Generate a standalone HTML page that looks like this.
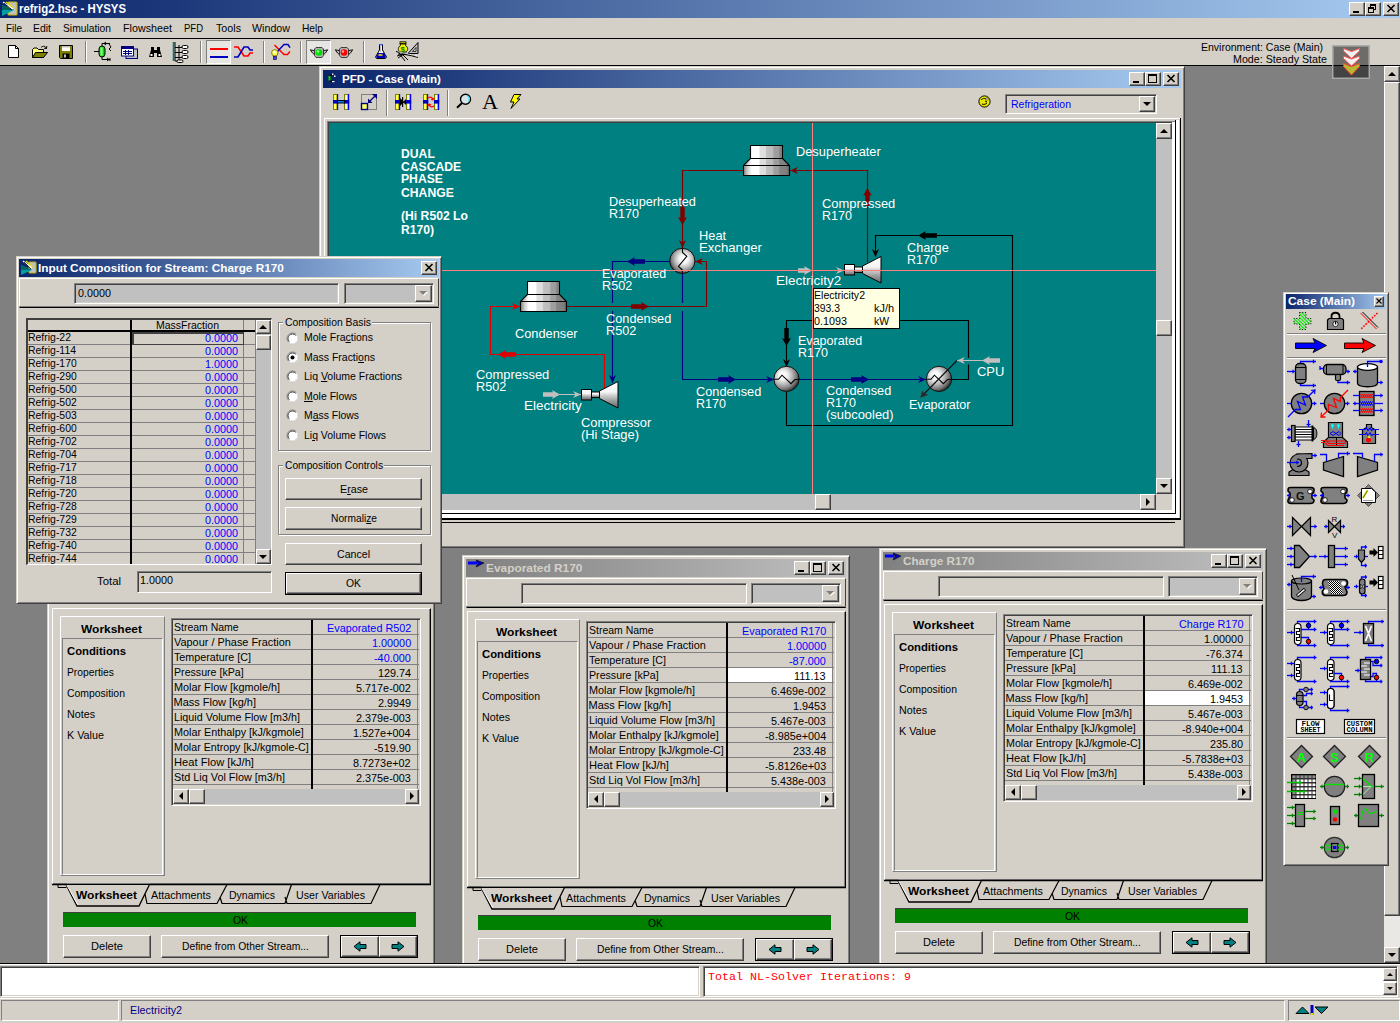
<!DOCTYPE html>
<html><head><meta charset="utf-8"><title>refrig2.hsc - HYSYS</title>
<style>
html,body{margin:0;padding:0}
body{width:1400px;height:1023px;position:relative;overflow:hidden;background:#808080;font-family:"Liberation Sans",sans-serif;font-size:11px}
.a{position:absolute;box-sizing:border-box}
.t{position:absolute;white-space:pre;transform-origin:0 50%}
.win{background:#d4d0c8;border:1px solid;border-color:#d4d0c8 #404040 #404040 #d4d0c8;box-shadow:inset 1px 1px #fff,inset -1px -1px #808080}
.btn{background:#d4d0c8;border:1px solid;border-color:#fff #404040 #404040 #fff;box-shadow:inset -1px -1px #808080}
.btn2{background:#d4d0c8;border:1px solid;border-color:#fff #404040 #404040 #fff;box-shadow:inset -1px -1px #808080,inset 1px 1px #d4d0c8}
.sunk{border:1px solid;border-color:#808080 #fff #fff #808080;box-shadow:inset 1px 1px #404040,inset -1px -1px #d4d0c8}
.sunk1{border:1px solid;border-color:#808080 #fff #fff #808080}
.rais1{border:1px solid;border-color:#fff #808080 #808080 #fff}
.etch{border:1px solid #808080;box-shadow:1px 1px #fff,inset 1px 1px #fff}
.tg{background:linear-gradient(90deg,#0a246a,#a6caf0)}
.tgi{background:linear-gradient(90deg,#808080,#c0c0c0)}
svg{position:absolute;overflow:visible}
</style></head>
<body>
<div class="a " style="left:1384px;top:66px;width:16px;height:897px;background:#eae8e4;"></div>
<div class="a btn2" style="left:1384px;top:66px;width:16px;height:16px;"></div>
<svg style="left:1388px;top:72px" width="8" height="4"><path d="M0 4L4 0L8 4Z" fill="#000"/></svg>
<div class="a btn2" style="left:1384px;top:947px;width:16px;height:16px;"></div>
<svg style="left:1388px;top:953px" width="8" height="4"><path d="M0 0L8 0L4 4Z" fill="#000"/></svg>
<div class="a btn2" style="left:1384px;top:82px;width:16px;height:834px;"></div>
<div class="a win" style="left:319px;top:66px;width:866px;height:482px;"></div>
<div class="a tg" style="left:323px;top:70px;width:858px;height:18px;"></div>
<svg style="left:328px;top:73px" width="9" height="10"><path d="M6 1.5C2 1 1.5 4 1.5 5.5C1.5 8 3 9 6 8.5" stroke="#000" stroke-width="1.4" fill="none"/><rect x="0.5" y="3" width="2" height="4.5" fill="#00e000"/><rect x="4" y="0.5" width="1.5" height="1.5" fill="#fff"/><rect x="6" y="2.5" width="1.5" height="1.5" fill="#fff"/><rect x="4" y="8" width="2.5" height="1.2" fill="#fff"/></svg>
<span class="t" style="left:342.0px;top:73px;font-size:11px;line-height:13px;color:#fff;font-weight:bold;transform:scaleX(1.058);">PFD - Case (Main)</span>
<div class="a btn" style="left:1129px;top:72px;width:16px;height:14px;"></div>
<div class="a " style="left:1133px;top:81px;width:6px;height:2px;background:#000;"></div>
<div class="a btn" style="left:1145px;top:72px;width:16px;height:14px;"></div>
<div class="a " style="left:1148px;top:74px;width:9px;height:9px;border:1px solid #000;border-top:2px solid #000;"></div>
<div class="a btn" style="left:1163px;top:72px;width:16px;height:14px;"></div>
<svg style="left:1167px;top:75px" width="8" height="7"><path d="M0.5 0L7.5 7M7.5 0L0.5 7" stroke="#000" stroke-width="1.6" fill="none"/></svg>
<div class="a " style="left:386px;top:90px;width:1px;height:26px;background:#808080;"></div>
<div class="a " style="left:387px;top:90px;width:1px;height:26px;background:#fff;"></div>
<div class="a " style="left:447px;top:90px;width:1px;height:26px;background:#808080;"></div>
<div class="a " style="left:448px;top:90px;width:1px;height:26px;background:#fff;"></div>
<svg style="left:333px;top:94px" width="17" height="16"><rect x="0.5" y="0.5" width="3.5" height="15" fill="#ffff00" stroke="#808000"/><rect x="1.7" y="1" width="1.200" height="14" fill="#fff"/><rect x="4" y="0" width="1.200" height="16" fill="#0000ff"/><rect x="0" y="6" width="5.200" height="3.600" fill="#0000c0"/><rect x="11.5" y="0.5" width="3.5" height="15" fill="#ffff00" stroke="#808000"/><rect x="12.7" y="1" width="1.200" height="14" fill="#fff"/><rect x="15" y="0" width="1.200" height="16" fill="#0000ff"/><rect x="11" y="6" width="5.200" height="3.600" fill="#0000c0"/><rect x="4" y="6" width="8" height="3.5" fill="#000"/><rect x="5" y="7" width="6" height="1.5" fill="#0080ff"/></svg>
<svg style="left:361px;top:94px" width="17" height="16"><rect x="0.5" y="0.5" width="15" height="15" fill="none" stroke="#808080"/><rect x="0.5" y="9.5" width="6" height="6" fill="#ffff60" stroke="#000080" stroke-width="1.4"/><path d="M14 2L8 8" stroke="#000080" stroke-width="1.3"/><path d="M7 4.5L7 9L11.5 9Z" fill="#000080"/><path d="M11 0L16 0L16 5Z" fill="#000080"/></svg>
<svg style="left:395px;top:94px" width="17" height="16"><rect x="0.5" y="0.5" width="3.5" height="15" fill="#ffff00" stroke="#808000"/><rect x="1.7" y="1" width="1.200" height="14" fill="#fff"/><rect x="4" y="0" width="1.200" height="16" fill="#0000ff"/><rect x="0" y="6" width="5.200" height="3.600" fill="#0000c0"/><rect x="11.5" y="0.5" width="3.5" height="15" fill="#ffff00" stroke="#808000"/><rect x="12.7" y="1" width="1.200" height="14" fill="#fff"/><rect x="15" y="0" width="1.200" height="16" fill="#0000ff"/><rect x="11" y="6" width="5.200" height="3.600" fill="#0000c0"/><path d="M5 4L9 8L5 12Z" fill="#000"/><path d="M11 5L8 8L11 11Z" fill="#000"/><rect x="7" y="3" width="1.2" height="10" fill="#000"/></svg>
<svg style="left:423px;top:94px" width="17" height="16"><rect x="0.5" y="0.5" width="3.5" height="15" fill="#ffff00" stroke="#808000"/><rect x="1.7" y="1" width="1.200" height="14" fill="#fff"/><rect x="4" y="0" width="1.200" height="16" fill="#0000ff"/><rect x="0" y="6" width="5.200" height="3.600" fill="#0000c0"/><rect x="11.5" y="0.5" width="3.5" height="15" fill="#ffff00" stroke="#808000"/><rect x="12.7" y="1" width="1.200" height="14" fill="#fff"/><rect x="15" y="0" width="1.200" height="16" fill="#0000ff"/><rect x="11" y="6" width="5.200" height="3.600" fill="#0000c0"/><path d="M5 4C8 2 10 4 10 6M10 6L8 5M10 6L11 4M11 12C8 14 6 12 6 10M6 10L8 11M6 10L5 12" stroke="#ff0000" stroke-width="1.2" fill="none"/></svg>
<svg style="left:455px;top:93px" width="18" height="18"><circle cx="10.5" cy="6.2" r="5" fill="#d8e4e8" stroke="#000" stroke-width="1.4"/><path d="M12.5 2.8A4 4 0 0 1 13.5 8.5" stroke="#40e0ff" stroke-width="1.3" fill="none"/><path d="M7 10L2 14.8" stroke="#000" stroke-width="2"/></svg>
<span class="t" style="left:482px;top:91.5px;font-family:'Liberation Serif',serif;font-size:20px;line-height:21px;color:#000;transform:scaleX(1.12)">A</span>
<svg style="left:509px;top:94px" width="13" height="16"><path d="M5 0.5L12 0.5L8 5L11 5L2 14.5L5 8L1.5 8Z" fill="#ffff00" stroke="#000" stroke-width="1"/></svg>
<svg style="left:978px;top:95px" width="13" height="13"><circle cx="6.5" cy="6.5" r="5.6" fill="#e8e800" stroke="#000"/><path d="M3 5C5 3 8 3 9 5M4 9C6 10 8 9 9 8M7 6L9 7" stroke="#000" stroke-width="1" fill="none"/><circle cx="9" cy="4" r="1.2" fill="#fff" stroke="#000" stroke-width="0.5"/></svg>
<div class="a sunk" style="left:1005px;top:94px;width:152px;height:20px;background:#d4d0c8;"></div>
<span class="t" style="left:1011.0px;top:97.5px;font-size:11px;line-height:13px;color:#0000ff;transform:scaleX(0.952);">Refrigeration</span>
<div class="a btn2" style="left:1139px;top:96px;width:16px;height:16px;"></div>
<svg style="left:1143px;top:102px" width="8" height="4"><path d="M0 0L8 0L4 4Z" fill="#000"/></svg>
<div class="a " style="left:324px;top:118px;width:856px;height:1px;background:#fff;"></div>
<div class="a " style="left:324px;top:118px;width:1px;height:395px;background:#fff;"></div>
<div class="a " style="left:327px;top:121px;width:848px;height:1px;background:#808080;"></div>
<div class="a " style="left:327px;top:121px;width:1px;height:390px;background:#808080;"></div>
<div class="a " style="left:328px;top:122px;width:846px;height:1px;background:#404040;"></div>
<div class="a " style="left:328px;top:122px;width:1px;height:388px;background:#404040;"></div>
<div class="a " style="left:1172px;top:122px;width:3px;height:391px;background:#fff;"></div>
<div class="a " style="left:328px;top:510px;width:847px;height:3px;background:#fff;"></div>
<div class="a " style="left:1175px;top:120px;width:1px;height:394px;background:#000;"></div>
<div class="a " style="left:326px;top:513px;width:850px;height:1px;background:#000;"></div>
<div class="a " style="left:1176px;top:120px;width:3px;height:398px;background:#fff;"></div>
<div class="a " style="left:324px;top:514px;width:855px;height:4px;background:#fff;"></div>
<div class="a " style="left:1180px;top:118px;width:1px;height:402px;background:#000;"></div>
<div class="a " style="left:323px;top:518px;width:858px;height:2px;background:#000;"></div>
<div class="a " style="left:323px;top:522px;width:852px;height:1px;background:#000;"></div>
<div class="a " style="left:329px;top:123px;width:827px;height:371px;background:#008080;overflow:hidden;"></div>
<div class="a " style="left:1156px;top:123px;width:16px;height:371px;background:#c0c0c0;"></div>
<div class="a btn2" style="left:1156px;top:123px;width:16px;height:16px;"></div>
<svg style="left:1160px;top:129px" width="8" height="4"><path d="M0 4L4 0L8 4Z" fill="#000"/></svg>
<div class="a btn2" style="left:1156px;top:478px;width:16px;height:16px;"></div>
<svg style="left:1160px;top:484px" width="8" height="4"><path d="M0 0L8 0L4 4Z" fill="#000"/></svg>
<div class="a btn2" style="left:1156px;top:320px;width:16px;height:16px;"></div>
<div class="a " style="left:329px;top:494px;width:827px;height:16px;background:#c0c0c0;"></div>
<div class="a btn2" style="left:329px;top:494px;width:16px;height:16px;"></div>
<svg style="left:335px;top:498px" width="4" height="8"><path d="M4 0L4 8L0 4Z" fill="#000"/></svg>
<div class="a btn2" style="left:1140px;top:494px;width:16px;height:16px;"></div>
<svg style="left:1146px;top:498px" width="4" height="8"><path d="M0 0L0 8L4 4Z" fill="#000"/></svg>
<div class="a btn2" style="left:815px;top:494px;width:16px;height:16px;"></div>
<div class="a " style="left:1156px;top:494px;width:16px;height:16px;background:#d4d0c8;"></div>
<svg style="left:0;top:0" width="1400" height="1023" shape-rendering="auto"><defs><linearGradient id="mg" x1="0" x2="1" y1="0" y2="0"><stop offset="0" stop-color="#808080"/><stop offset=".08" stop-color="#c8c8c8"/><stop offset=".18" stop-color="#ffffff"/><stop offset=".33" stop-color="#ffffff"/><stop offset=".36" stop-color="#e0e0e0"/><stop offset=".48" stop-color="#dcdcdc"/><stop offset=".5" stop-color="#c0c0c0"/><stop offset=".63" stop-color="#bcbcbc"/><stop offset=".66" stop-color="#a0a0a0"/><stop offset=".76" stop-color="#9c9c9c"/><stop offset=".79" stop-color="#848484"/><stop offset=".93" stop-color="#808080"/><stop offset="1" stop-color="#606060"/></linearGradient><radialGradient id="sg" cx=".36" cy=".36" r=".68"><stop offset="0" stop-color="#ffffff"/><stop offset=".25" stop-color="#f4f4f4"/><stop offset=".55" stop-color="#b4b4b4"/><stop offset=".8" stop-color="#787878"/><stop offset="1" stop-color="#282828"/></radialGradient><radialGradient id="sg2" cx=".56" cy=".42" r=".6"><stop offset="0" stop-color="#ffffff"/><stop offset=".3" stop-color="#f4f4f4"/><stop offset=".6" stop-color="#b8b8b8"/><stop offset=".85" stop-color="#787878"/><stop offset="1" stop-color="#282828"/></radialGradient><linearGradient id="cg" x1="0" x2="0" y1="0" y2="1"><stop offset="0" stop-color="#ffffff"/><stop offset=".4" stop-color="#f4f4f4"/><stop offset=".52" stop-color="#d0d0d0"/><stop offset=".75" stop-color="#989898"/><stop offset="1" stop-color="#6c6c6c"/></linearGradient></defs><path d="M670 261.5L612.5 261.5L612.5 383" stroke="#000080" stroke-width="1.15" fill="none" stroke-linejoin="miter"/><path d="M645 259.3L634 259.3L635 257.0L627 261.5L635 266.0L634 263.7L645 263.7Z" fill="#000080"/><path d="M612.5 383L608.9 375L612.5 377.5L616.1 375Z" fill="#000080"/><path d="M682.5 273L682.5 379.5L774 379.5" stroke="#000080" stroke-width="1.15" fill="none" stroke-linejoin="miter"/><path d="M718 377.3L729 377.3L728 375.0L736 379.5L728 384.0L729 381.7L718 381.7Z" fill="#000080"/><path d="M774 379.5L766 375.9L768.5 379.5L766 383.1Z" fill="#000080"/><path d="M799 379.5L926 379.5" stroke="#000080" stroke-width="1.15" fill="none" stroke-linejoin="miter"/><path d="M851 377.3L862 377.3L861 375.0L869 379.5L861 384.0L862 381.7L851 381.7Z" fill="#000080"/><path d="M926 379.5L918 375.9L920.5 379.5L918 383.1Z" fill="#000080"/><rect x="611" y="303" width="3" height="8" fill="#008080"/><rect x="681" y="303" width="3" height="8" fill="#008080"/><path d="M743 170.5L682.5 170.5L682.5 248" stroke="#800000" stroke-width="1.15" fill="none" stroke-linejoin="miter"/><path d="M680.3 207L680.3 218L678.0 217L682.5 225L687.0 217L684.7 218L684.7 207Z" fill="#800000"/><path d="M682.5 248L678.9 240L682.5 242.5L686.1 240Z" fill="#800000"/><path d="M867.5 262L867.5 170.5L790 170.5" stroke="#800000" stroke-width="1.15" fill="none" stroke-linejoin="miter"/><path d="M865.3 206L865.3 195L863.0 196L867.5 188L872.0 196L869.7 195L869.7 206Z" fill="#800000"/><path d="M790 170.5L798 166.9L795.5 170.5L798 174.1Z" fill="#800000"/><path d="M567 306.5L706.5 306.5L706.5 261.5L695 261.5" stroke="#800000" stroke-width="1.15" fill="none" stroke-linejoin="miter"/><path d="M631 304.3L642 304.3L641 302.0L649 306.5L641 311.0L642 308.7L631 308.7Z" fill="#800000"/><path d="M695 261.5L703 257.9L700.5 261.5L703 265.1Z" fill="#800000"/><path d="M604.5 388L604.5 354.5L490.5 354.5L490.5 306.5L520 306.5" stroke="#e00000" stroke-width="1.15" fill="none" stroke-linejoin="miter"/><path d="M516 352.3L505 352.3L506 350.0L498 354.5L506 359.0L505 356.7L516 356.7Z" fill="#e00000"/><path d="M520 306.5L512 302.9L514.5 306.5L512 310.1Z" fill="#e00000"/><path d="M951 379.5L968.5 379.5L968.5 320.5L786.5 320.5L786.5 367" stroke="#000000" stroke-width="1.15" fill="none" stroke-linejoin="miter"/><path d="M784.3 328L784.3 339L782.0 338L786.5 346L791.0 338L788.7 339L788.7 328Z" fill="#000000"/><path d="M786.5 367L782.9 359L786.5 361.5L790.1 359Z" fill="#000000"/><path d="M786.5 392L786.5 425.5L1012.5 425.5L1012.5 235.5L875.5 235.5L875.5 256" stroke="#000000" stroke-width="1.15" fill="none" stroke-linejoin="miter"/><path d="M937 233.3L925 233.3L926 231.0L918 235.5L926 240.0L925 237.7L937 237.7Z" fill="#000000"/><path d="M875.5 257L871.9 249L875.5 251.5L879.1 249Z" fill="#000000"/><path d="M543 394.5L581 394.5" stroke="#c0c0c0" stroke-width="1.15" fill="none" stroke-linejoin="miter"/><path d="M543 392.3L553 392.3L552 390.0L560 394.5L552 399.0L553 396.7L543 396.7Z" fill="#c0c0c0"/><path d="M581 394.5L573 390.9L575.5 394.5L573 398.1Z" fill="#c0c0c0"/><path d="M798 270.5L844 270.5" stroke="#c0c0c0" stroke-width="1.15" fill="none" stroke-linejoin="miter"/><path d="M798 268.3L805 268.3L804 266.0L812 270.5L804 275.0L805 272.7L798 272.7Z" fill="#c0c0c0"/><path d="M844 270.5L836 266.9L838.5 270.5L836 274.1Z" fill="#c0c0c0"/><rect x="967" y="358" width="3" height="6.5" fill="#008080"/><path d="M1000 360.5L957 360.5" stroke="#c0c0c0" stroke-width="1.15" fill="none" stroke-linejoin="miter"/><path d="M1000 358.3L989 358.3L990 356.0L982 360.5L990 365.0L989 362.7L1000 362.7Z" fill="#c0c0c0"/><path d="M957 360.5L965 356.9L962.5 360.5L965 364.1Z" fill="#c0c0c0"/><path d="M750.5 145.5L782.5 145.5L782.5 158.5L789.5 165.5L789.5 175.5L743.5 175.5L743.5 165.5L750.5 158.5Z" fill="url(#mg)" stroke="#000" stroke-width="1.1"/><path d="M743.5 165.5L789.5 165.5M750.5 158.5L782.5 158.5" stroke="#000" stroke-width="1"/><path d="M527.5 281.5L559.5 281.5L559.5 294.5L566.5 301.5L566.5 311.5L520.5 311.5L520.5 301.5L527.5 294.5Z" fill="url(#mg)" stroke="#000" stroke-width="1.1"/><path d="M520.5 301.5L566.5 301.5M527.5 294.5L559.5 294.5" stroke="#000" stroke-width="1"/><circle cx="682.3" cy="260.9" r="12.6" fill="url(#sg2)" stroke="#101010" stroke-width="1"/><path d="M682.5 248.5L682.5 252.4L686.8 256.3L678.4 266.4L682 269.6L682.5 273.4" stroke="#000" stroke-width="1.1" fill="none"/><circle cx="786.5" cy="378.9" r="12.6" fill="url(#sg)" stroke="#101010" stroke-width="1"/><path d="M773.5 379.3L778.5 379.3L782 375.2L791 383.7L795 379.5L799.500 379.3" stroke="#000" stroke-width="1.1" fill="none"/><circle cx="939" cy="378.9" r="12.6" fill="url(#sg)" stroke="#101010" stroke-width="1"/><path d="M926 379.3L931 379.3L934.4 375.2L943.4 383.7L947.5 379.5L952 379.3" stroke="#000" stroke-width="1.1" fill="none"/><path d="M957 360.5L924 394" stroke="#101010" stroke-width="1.1" fill="none" stroke-linejoin="miter"/><path d="M920.300 397.800L922.300 390.500L924.500 393.800L928.500 394.800Z" fill="#302828"/><rect x="844.5" y="264.5" width="10" height="10.5" fill="url(#cg)" stroke="#000" stroke-width="1"/><rect x="854.5" y="267.0" width="8" height="5.5" fill="url(#cg)" stroke="#000" stroke-width="1"/><path d="M862.5 266.0L881.0 256.5L881.0 283.0L862.5 273.5Z" fill="url(#cg)" stroke="#000" stroke-width="1"/><rect x="581.5" y="389.5" width="10" height="10.5" fill="url(#cg)" stroke="#000" stroke-width="1"/><rect x="591.5" y="392.0" width="8" height="5.5" fill="url(#cg)" stroke="#000" stroke-width="1"/><path d="M599.5 391.0L618.0 381.5L618.0 408.0L599.5 398.5Z" fill="url(#cg)" stroke="#000" stroke-width="1"/><path d="M441 270.5L1156 270.5M812.5 123L812.5 494" stroke="#ff7f7f" stroke-width="1" fill="none" shape-rendering="crispEdges"/></svg>
<span class="t" style="left:400.5px;top:148.3px;font-size:12px;line-height:14px;color:#fff;font-weight:bold;transform:scaleX(1.015);line-height:12.3px;">DUAL</span>
<span class="t" style="left:400.5px;top:161.2px;font-size:12px;line-height:14px;color:#fff;font-weight:bold;transform:scaleX(1.015);line-height:12.3px;">CASCADE</span>
<span class="t" style="left:400.5px;top:173.3px;font-size:12px;line-height:14px;color:#fff;font-weight:bold;transform:scaleX(1.015);line-height:12.3px;">PHASE</span>
<span class="t" style="left:400.5px;top:186.5px;font-size:12px;line-height:14px;color:#fff;font-weight:bold;transform:scaleX(1.015);line-height:12.3px;">CHANGE</span>
<span class="t" style="left:400.5px;top:210.1px;font-size:12px;line-height:14px;color:#fff;font-weight:bold;transform:scaleX(1.015);line-height:12.3px;">(Hi R502 Lo</span>
<span class="t" style="left:400.5px;top:223.5px;font-size:12px;line-height:14px;color:#fff;font-weight:bold;transform:scaleX(1.015);line-height:12.3px;">R170)</span>
<span class="t" style="left:796.0px;top:145.8px;font-size:13px;line-height:15px;color:#fff;transform:scaleX(0.985);line-height:12px;">Desuperheater</span>
<span class="t" style="left:609.0px;top:195.8px;font-size:13px;line-height:15px;color:#fff;transform:scaleX(0.978);line-height:12px;">Desuperheated</span>
<span class="t" style="left:609.0px;top:207.8px;font-size:13px;line-height:15px;color:#fff;transform:scaleX(0.962);line-height:12px;">R170</span>
<span class="t" style="left:822.0px;top:198.3px;font-size:13px;line-height:15px;color:#fff;transform:scaleX(0.994);line-height:12px;">Compressed</span>
<span class="t" style="left:822.0px;top:210.3px;font-size:13px;line-height:15px;color:#fff;transform:scaleX(0.962);line-height:12px;">R170</span>
<span class="t" style="left:699.0px;top:230.3px;font-size:13px;line-height:15px;color:#fff;transform:scaleX(0.987);line-height:12px;">Heat</span>
<span class="t" style="left:699.0px;top:242.3px;font-size:13px;line-height:15px;color:#fff;transform:scaleX(1.013);line-height:12px;">Exchanger</span>
<span class="t" style="left:906.5px;top:242.3px;font-size:13px;line-height:15px;color:#fff;transform:scaleX(0.978);line-height:12px;">Charge</span>
<span class="t" style="left:906.5px;top:254.3px;font-size:13px;line-height:15px;color:#fff;transform:scaleX(0.962);line-height:12px;">R170</span>
<span class="t" style="left:602.0px;top:267.8px;font-size:13px;line-height:15px;color:#fff;transform:scaleX(0.965);line-height:12px;">Evaporated</span>
<span class="t" style="left:602.0px;top:279.8px;font-size:13px;line-height:15px;color:#fff;transform:scaleX(0.974);line-height:12px;">R502</span>
<span class="t" style="left:776.0px;top:275.3px;font-size:13px;line-height:15px;color:#fff;transform:scaleX(1.039);line-height:12px;">Electricity2</span>
<span class="t" style="left:606.0px;top:312.8px;font-size:13px;line-height:15px;color:#fff;transform:scaleX(0.981);line-height:12px;">Condensed</span>
<span class="t" style="left:606.0px;top:324.8px;font-size:13px;line-height:15px;color:#fff;transform:scaleX(0.974);line-height:12px;">R502</span>
<span class="t" style="left:515.0px;top:328.3px;font-size:13px;line-height:15px;color:#fff;transform:scaleX(0.984);line-height:12px;">Condenser</span>
<span class="t" style="left:798.0px;top:335.3px;font-size:13px;line-height:15px;color:#fff;transform:scaleX(0.965);line-height:12px;">Evaporated</span>
<span class="t" style="left:798.0px;top:347.3px;font-size:13px;line-height:15px;color:#fff;transform:scaleX(0.962);line-height:12px;">R170</span>
<span class="t" style="left:977.0px;top:366.3px;font-size:13px;line-height:15px;color:#fff;transform:scaleX(0.994);line-height:12px;">CPU</span>
<span class="t" style="left:476.0px;top:368.8px;font-size:13px;line-height:15px;color:#fff;transform:scaleX(0.994);line-height:12px;">Compressed</span>
<span class="t" style="left:476.0px;top:380.8px;font-size:13px;line-height:15px;color:#fff;transform:scaleX(0.974);line-height:12px;">R502</span>
<span class="t" style="left:696.0px;top:385.8px;font-size:13px;line-height:15px;color:#fff;transform:scaleX(0.981);line-height:12px;">Condensed</span>
<span class="t" style="left:696.0px;top:397.8px;font-size:13px;line-height:15px;color:#fff;transform:scaleX(0.962);line-height:12px;">R170</span>
<span class="t" style="left:826.0px;top:385.3px;font-size:13px;line-height:15px;color:#fff;transform:scaleX(0.981);line-height:12px;">Condensed</span>
<span class="t" style="left:826.0px;top:397.3px;font-size:13px;line-height:15px;color:#fff;transform:scaleX(0.962);line-height:12px;">R170</span>
<span class="t" style="left:826.0px;top:409.3px;font-size:13px;line-height:15px;color:#fff;transform:scaleX(0.995);line-height:12px;">(subcooled)</span>
<span class="t" style="left:909.0px;top:399.3px;font-size:13px;line-height:15px;color:#fff;transform:scaleX(0.965);line-height:12px;">Evaporator</span>
<span class="t" style="left:524.0px;top:400.3px;font-size:13px;line-height:15px;color:#fff;transform:scaleX(1.039);line-height:12px;">Electricity</span>
<span class="t" style="left:581.0px;top:417.3px;font-size:13px;line-height:15px;color:#fff;transform:scaleX(0.993);line-height:12px;">Compressor</span>
<span class="t" style="left:581.0px;top:429.3px;font-size:13px;line-height:15px;color:#fff;transform:scaleX(0.991);line-height:12px;">(Hi Stage)</span>
<div class="a " style="left:813px;top:288px;width:87px;height:41px;background:#ffffe1;border:1px solid #000;"></div>
<span class="t" style="left:814.0px;top:289px;font-size:11px;line-height:13px;color:#000;transform:scaleX(0.959);">Electricity2</span>
<span class="t" style="left:814.0px;top:302px;font-size:11px;line-height:13px;color:#000;transform:scaleX(0.943);">393.3</span>
<span class="t" style="left:874.0px;top:302px;font-size:11px;line-height:13px;color:#000;transform:scaleX(0.991);">kJ/h</span>
<span class="t" style="left:814.0px;top:315px;font-size:11px;line-height:13px;color:#000;transform:scaleX(0.980);">0.1093</span>
<span class="t" style="left:874.0px;top:315px;font-size:11px;line-height:13px;color:#000;transform:scaleX(0.945);">kW</span>
<div class="a win" style="left:47px;top:552px;width:388px;height:430px;"></div>
<div class="a " style="left:52px;top:608px;width:379px;height:277px;border:1px solid;border-color:#fff #000 #000 #fff;box-shadow:inset -1px -1px #808080;"></div>
<div class="a rais1" style="left:60px;top:616px;width:105px;height:260px;"></div>
<div class="a sunk1" style="left:62px;top:638px;width:101px;height:237px;"></div>
<span class="t" style="left:81.0px;top:623px;font-size:11px;line-height:13px;color:#000;font-weight:bold;transform:scaleX(1.088);">Worksheet</span>
<span class="t" style="left:67.3px;top:644.5px;font-size:11px;line-height:13px;color:#000;font-weight:bold;transform:scaleX(1.027);">Conditions</span>
<span class="t" style="left:67.3px;top:665.5px;font-size:11px;line-height:13px;color:#000;transform:scaleX(0.937);">Properties</span>
<span class="t" style="left:67.3px;top:686.5px;font-size:11px;line-height:13px;color:#000;transform:scaleX(0.948);">Composition</span>
<span class="t" style="left:67.3px;top:707.5px;font-size:11px;line-height:13px;color:#000;transform:scaleX(0.974);">Notes</span>
<span class="t" style="left:67.3px;top:728.5px;font-size:11px;line-height:13px;color:#000;transform:scaleX(0.980);">K Value</span>
<div class="a " style="left:171px;top:618px;width:250px;height:188px;border:1px solid;border-color:#808080 #fff #fff #808080;box-shadow:inset 1px 1px #404040;"></div>
<div class="a " style="left:173px;top:634px;width:246px;height:1px;background:#808080;"></div>
<span class="t" style="left:173.5px;top:621px;font-size:11px;line-height:13px;color:#000;transform:scaleX(0.953);">Stream Name</span>
<span class="t" style="left:326.6px;top:621.5px;font-size:11px;line-height:13px;color:#0000ff;transform:scaleX(0.985);">Evaporated R502</span>
<div class="a " style="left:173px;top:649px;width:246px;height:1px;background:#808080;"></div>
<span class="t" style="left:173.5px;top:636px;font-size:11px;line-height:13px;color:#000;transform:scaleX(0.992);">Vapour / Phase Fraction</span>
<span class="t" style="left:371.8px;top:636.5px;font-size:11px;line-height:13px;color:#0000ff;transform:scaleX(0.985);">1.00000</span>
<div class="a " style="left:173px;top:664px;width:246px;height:1px;background:#808080;"></div>
<span class="t" style="left:173.5px;top:651px;font-size:11px;line-height:13px;color:#000;transform:scaleX(0.976);">Temperature [C]</span>
<span class="t" style="left:374.2px;top:651.5px;font-size:11px;line-height:13px;color:#0000ff;transform:scaleX(0.985);">-40.000</span>
<div class="a " style="left:173px;top:679px;width:246px;height:1px;background:#808080;"></div>
<span class="t" style="left:173.5px;top:666px;font-size:11px;line-height:13px;color:#000;transform:scaleX(0.966);">Pressure [kPa]</span>
<span class="t" style="left:377.8px;top:666.5px;font-size:11px;line-height:13px;color:#000;transform:scaleX(0.985);">129.74</span>
<div class="a " style="left:173px;top:694px;width:246px;height:1px;background:#808080;"></div>
<span class="t" style="left:173.5px;top:681px;font-size:11px;line-height:13px;color:#000;transform:scaleX(0.985);">Molar Flow [kgmole/h]</span>
<span class="t" style="left:356.1px;top:681.5px;font-size:11px;line-height:13px;color:#000;transform:scaleX(0.985);">5.717e-002</span>
<div class="a " style="left:173px;top:709px;width:246px;height:1px;background:#808080;"></div>
<span class="t" style="left:173.5px;top:696px;font-size:11px;line-height:13px;color:#000;">Mass Flow [kg/h]</span>
<span class="t" style="left:377.8px;top:696.5px;font-size:11px;line-height:13px;color:#000;transform:scaleX(0.985);">2.9949</span>
<div class="a " style="left:173px;top:724px;width:246px;height:1px;background:#808080;"></div>
<span class="t" style="left:173.5px;top:711px;font-size:11px;line-height:13px;color:#000;transform:scaleX(0.976);">Liquid Volume Flow [m3/h]</span>
<span class="t" style="left:356.1px;top:711.5px;font-size:11px;line-height:13px;color:#000;transform:scaleX(0.985);">2.379e-003</span>
<div class="a " style="left:173px;top:739px;width:246px;height:1px;background:#808080;"></div>
<span class="t" style="left:173.5px;top:726px;font-size:11px;line-height:13px;color:#000;transform:scaleX(0.982);">Molar Enthalpy [kJ/kgmole]</span>
<span class="t" style="left:353.4px;top:726.5px;font-size:11px;line-height:13px;color:#000;transform:scaleX(0.985);">1.527e+004</span>
<div class="a " style="left:173px;top:754px;width:246px;height:1px;background:#808080;"></div>
<span class="t" style="left:173.5px;top:741px;font-size:11px;line-height:13px;color:#000;transform:scaleX(0.970);">Molar Entropy [kJ/kgmole-C]</span>
<span class="t" style="left:374.2px;top:741.5px;font-size:11px;line-height:13px;color:#000;transform:scaleX(0.985);">-519.90</span>
<div class="a " style="left:173px;top:769px;width:246px;height:1px;background:#808080;"></div>
<span class="t" style="left:173.5px;top:756px;font-size:11px;line-height:13px;color:#000;transform:scaleX(1.014);">Heat Flow [kJ/h]</span>
<span class="t" style="left:353.4px;top:756.5px;font-size:11px;line-height:13px;color:#000;transform:scaleX(0.985);">8.7273e+02</span>
<div class="a " style="left:173px;top:784px;width:246px;height:1px;background:#808080;"></div>
<span class="t" style="left:173.5px;top:771px;font-size:11px;line-height:13px;color:#000;transform:scaleX(0.986);">Std Liq Vol Flow [m3/h]</span>
<span class="t" style="left:356.1px;top:771.5px;font-size:11px;line-height:13px;color:#000;transform:scaleX(0.985);">2.375e-003</span>
<div class="a " style="left:311px;top:620px;width:2px;height:169px;background:#000;"></div>
<div class="a " style="left:417px;top:620px;width:1px;height:169px;background:#808080;"></div>
<div class="a " style="left:173px;top:789px;width:246px;height:15px;background:#c0c0c0;"></div>
<div class="a btn2" style="left:173px;top:789px;width:16px;height:15px;"></div>
<svg style="left:179px;top:792px" width="4" height="8"><path d="M4 0L4 8L0 4Z" fill="#000"/></svg>
<div class="a btn2" style="left:405px;top:789px;width:14px;height:15px;"></div>
<svg style="left:410px;top:792px" width="4" height="8"><path d="M0 0L0 8L4 4Z" fill="#000"/></svg>
<div class="a btn2" style="left:189px;top:789px;width:16px;height:15px;"></div>
<svg style="left:47px;top:552px" width="388" height="360"><path d="M5 332.5L19 332.5L30 354L92 354L102.5 332.5" stroke="#000" stroke-width="1.3" fill="none"/><path d="M11 333L11 335.5L19.5 335.5" stroke="#000" stroke-width="1" fill="none"/><path d="M19.8 333L30.6 352.6" stroke="#fff" stroke-width="1" fill="none"/><path d="M102.5 332.5L384 332.5" stroke="#000" stroke-width="1.3" fill="none"/><path d="M98 342L100 351.500L170 351.500L180 332.500M173 345L175 351.500L238 351.500L244.500 332.500M238 345L240 351.500L324 351.500L333 332.500" stroke="#000" stroke-width="1.2" fill="none"/></svg>
<span class="t" style="left:76.0px;top:888.5px;font-size:11px;line-height:13px;color:#000;font-weight:bold;transform:scaleX(1.088);">Worksheet</span>
<span class="t" style="left:151.0px;top:888.5px;font-size:11px;line-height:13px;color:#000;transform:scaleX(0.981);">Attachments</span>
<span class="t" style="left:229.0px;top:888.5px;font-size:11px;line-height:13px;color:#000;transform:scaleX(0.953);">Dynamics</span>
<span class="t" style="left:295.5px;top:888.5px;font-size:11px;line-height:13px;color:#000;transform:scaleX(0.967);">User Variables</span>
<div class="a " style="left:63px;top:912px;width:353px;height:15px;background:#008000;border-top:1px solid #404040;"></div>
<span class="t" style="left:232.5px;top:913.5px;font-size:11px;line-height:13px;color:#000;transform:scaleX(0.943);">OK</span>
<div class="a btn2" style="left:63px;top:935px;width:88px;height:23px;"></div>
<span class="t" style="left:91.0px;top:940px;font-size:11px;line-height:13px;color:#000;transform:scaleX(1.006);">Delete</span>
<div class="a btn2" style="left:161px;top:935px;width:168px;height:23px;"></div>
<span class="t" style="left:181.5px;top:940px;font-size:11px;line-height:13px;color:#000;transform:scaleX(0.939);">Define from Other Stream...</span>
<div class="a " style="left:340px;top:935px;width:78px;height:23px;border:1px solid #000;"></div>
<div class="a btn2" style="left:341px;top:936px;width:38px;height:21px;"></div>
<div class="a btn2" style="left:379px;top:936px;width:38px;height:21px;"></div>
<svg style="left:353px;top:941px" width="14" height="11"><path d="M13 3.5L7 3.5L7 0.8L1 5.5L7 10.2L7 7.5L13 7.5Z" fill="#008080" stroke="#000" stroke-width="1"/></svg>
<svg style="left:391px;top:941px" width="14" height="11"><path d="M1 3.5L7 3.5L7 0.8L13 5.5L7 10.2L7 7.5L1 7.5Z" fill="#008080" stroke="#000" stroke-width="1"/></svg>
<div class="a win" style="left:462px;top:555px;width:388px;height:430px;"></div>
<div class="a tgi" style="left:466px;top:559px;width:380px;height:18px;"></div>
<svg style="left:468px;top:560px" width="17" height="8"><path d="M0 1.5L9 1.5L9 4.5L0 4.5Z" fill="#0000ff"/><path d="M8 0L16 3L8 7L10 3.5Z" fill="#0000c0" stroke="#000" stroke-width="0.6"/></svg>
<span class="t" style="left:485.5px;top:562px;font-size:11px;line-height:13px;color:#d4d0c8;font-weight:bold;transform:scaleX(1.080);">Evaporated R170</span>
<div class="a btn" style="left:794px;top:561px;width:16px;height:14px;"></div>
<div class="a " style="left:798px;top:570px;width:6px;height:2px;background:#000;"></div>
<div class="a btn" style="left:810px;top:561px;width:16px;height:14px;"></div>
<div class="a " style="left:813px;top:563px;width:9px;height:9px;border:1px solid #000;border-top:2px solid #000;"></div>
<div class="a btn" style="left:828px;top:561px;width:16px;height:14px;"></div>
<svg style="left:832px;top:564px" width="8" height="7"><path d="M0.5 0L7.5 7M7.5 0L0.5 7" stroke="#000" stroke-width="1.6" fill="none"/></svg>
<div class="a " style="left:466px;top:578px;width:380px;height:30px;border:1px solid;border-color:#fff #404040 #000 #fff;"></div>
<div class="a " style="left:466px;top:606px;width:380px;height:1px;background:#808080;"></div>
<div class="a sunk" style="left:521px;top:583px;width:226px;height:21px;"></div>
<div class="a sunk" style="left:751px;top:583px;width:90px;height:21px;background:#c0c0c0;"></div>
<div class="a btn2" style="left:822px;top:585px;width:17px;height:17px;"></div>
<svg style="left:827px;top:592px" width="8" height="4"><path d="M0 0L8 0L4 4Z" fill="#fff"/></svg>
<svg style="left:826px;top:591px" width="8" height="4"><path d="M0 0L8 0L4 4Z" fill="#808080"/></svg>
<div class="a " style="left:467px;top:611px;width:379px;height:277px;border:1px solid;border-color:#fff #000 #000 #fff;box-shadow:inset -1px -1px #808080;"></div>
<div class="a rais1" style="left:475px;top:619px;width:105px;height:260px;"></div>
<div class="a sunk1" style="left:477px;top:641px;width:101px;height:237px;"></div>
<span class="t" style="left:496.0px;top:626px;font-size:11px;line-height:13px;color:#000;font-weight:bold;transform:scaleX(1.088);">Worksheet</span>
<span class="t" style="left:482.3px;top:647.5px;font-size:11px;line-height:13px;color:#000;font-weight:bold;transform:scaleX(1.027);">Conditions</span>
<span class="t" style="left:482.3px;top:668.5px;font-size:11px;line-height:13px;color:#000;transform:scaleX(0.937);">Properties</span>
<span class="t" style="left:482.3px;top:689.5px;font-size:11px;line-height:13px;color:#000;transform:scaleX(0.948);">Composition</span>
<span class="t" style="left:482.3px;top:710.5px;font-size:11px;line-height:13px;color:#000;transform:scaleX(0.974);">Notes</span>
<span class="t" style="left:482.3px;top:731.5px;font-size:11px;line-height:13px;color:#000;transform:scaleX(0.980);">K Value</span>
<div class="a " style="left:586px;top:621px;width:250px;height:188px;border:1px solid;border-color:#808080 #fff #fff #808080;box-shadow:inset 1px 1px #404040;"></div>
<div class="a " style="left:588px;top:637px;width:246px;height:1px;background:#808080;"></div>
<span class="t" style="left:588.5px;top:624px;font-size:11px;line-height:13px;color:#000;transform:scaleX(0.953);">Stream Name</span>
<span class="t" style="left:741.6px;top:624.5px;font-size:11px;line-height:13px;color:#0000ff;transform:scaleX(0.985);">Evaporated R170</span>
<div class="a " style="left:588px;top:652px;width:246px;height:1px;background:#808080;"></div>
<span class="t" style="left:588.5px;top:639px;font-size:11px;line-height:13px;color:#000;transform:scaleX(0.992);">Vapour / Phase Fraction</span>
<span class="t" style="left:786.8px;top:639.5px;font-size:11px;line-height:13px;color:#0000ff;transform:scaleX(0.985);">1.00000</span>
<div class="a " style="left:588px;top:667px;width:246px;height:1px;background:#808080;"></div>
<span class="t" style="left:588.5px;top:654px;font-size:11px;line-height:13px;color:#000;transform:scaleX(0.976);">Temperature [C]</span>
<span class="t" style="left:789.2px;top:654.5px;font-size:11px;line-height:13px;color:#0000ff;transform:scaleX(0.985);">-87.000</span>
<div class="a " style="left:728px;top:668px;width:104px;height:14px;background:#fff;"></div>
<div class="a " style="left:588px;top:682px;width:246px;height:1px;background:#808080;"></div>
<span class="t" style="left:588.5px;top:669px;font-size:11px;line-height:13px;color:#000;transform:scaleX(0.966);">Pressure [kPa]</span>
<span class="t" style="left:794.4px;top:669.5px;font-size:11px;line-height:13px;color:#000;transform:scaleX(0.985);">111.13</span>
<div class="a " style="left:588px;top:697px;width:246px;height:1px;background:#808080;"></div>
<span class="t" style="left:588.5px;top:684px;font-size:11px;line-height:13px;color:#000;transform:scaleX(0.985);">Molar Flow [kgmole/h]</span>
<span class="t" style="left:771.1px;top:684.5px;font-size:11px;line-height:13px;color:#000;transform:scaleX(0.985);">6.469e-002</span>
<div class="a " style="left:588px;top:712px;width:246px;height:1px;background:#808080;"></div>
<span class="t" style="left:588.5px;top:699px;font-size:11px;line-height:13px;color:#000;">Mass Flow [kg/h]</span>
<span class="t" style="left:792.8px;top:699.5px;font-size:11px;line-height:13px;color:#000;transform:scaleX(0.985);">1.9453</span>
<div class="a " style="left:588px;top:727px;width:246px;height:1px;background:#808080;"></div>
<span class="t" style="left:588.5px;top:714px;font-size:11px;line-height:13px;color:#000;transform:scaleX(0.976);">Liquid Volume Flow [m3/h]</span>
<span class="t" style="left:771.1px;top:714.5px;font-size:11px;line-height:13px;color:#000;transform:scaleX(0.985);">5.467e-003</span>
<div class="a " style="left:588px;top:742px;width:246px;height:1px;background:#808080;"></div>
<span class="t" style="left:588.5px;top:729px;font-size:11px;line-height:13px;color:#000;transform:scaleX(0.982);">Molar Enthalpy [kJ/kgmole]</span>
<span class="t" style="left:764.8px;top:729.5px;font-size:11px;line-height:13px;color:#000;transform:scaleX(0.985);">-8.985e+004</span>
<div class="a " style="left:588px;top:757px;width:246px;height:1px;background:#808080;"></div>
<span class="t" style="left:588.5px;top:744px;font-size:11px;line-height:13px;color:#000;transform:scaleX(0.970);">Molar Entropy [kJ/kgmole-C]</span>
<span class="t" style="left:792.8px;top:744.5px;font-size:11px;line-height:13px;color:#000;transform:scaleX(0.985);">233.48</span>
<div class="a " style="left:588px;top:772px;width:246px;height:1px;background:#808080;"></div>
<span class="t" style="left:588.5px;top:759px;font-size:11px;line-height:13px;color:#000;transform:scaleX(1.014);">Heat Flow [kJ/h]</span>
<span class="t" style="left:764.8px;top:759.5px;font-size:11px;line-height:13px;color:#000;transform:scaleX(0.985);">-5.8126e+03</span>
<div class="a " style="left:588px;top:787px;width:246px;height:1px;background:#808080;"></div>
<span class="t" style="left:588.5px;top:774px;font-size:11px;line-height:13px;color:#000;transform:scaleX(0.986);">Std Liq Vol Flow [m3/h]</span>
<span class="t" style="left:771.1px;top:774.5px;font-size:11px;line-height:13px;color:#000;transform:scaleX(0.985);">5.438e-003</span>
<div class="a " style="left:726px;top:623px;width:2px;height:169px;background:#000;"></div>
<div class="a " style="left:832px;top:623px;width:1px;height:169px;background:#808080;"></div>
<div class="a " style="left:588px;top:792px;width:246px;height:15px;background:#c0c0c0;"></div>
<div class="a btn2" style="left:588px;top:792px;width:16px;height:15px;"></div>
<svg style="left:594px;top:795px" width="4" height="8"><path d="M4 0L4 8L0 4Z" fill="#000"/></svg>
<div class="a btn2" style="left:820px;top:792px;width:14px;height:15px;"></div>
<svg style="left:825px;top:795px" width="4" height="8"><path d="M0 0L0 8L4 4Z" fill="#000"/></svg>
<div class="a btn2" style="left:604px;top:792px;width:16px;height:15px;"></div>
<svg style="left:462px;top:555px" width="388" height="360"><path d="M5 332.5L19 332.5L30 354L92 354L102.5 332.5" stroke="#000" stroke-width="1.3" fill="none"/><path d="M11 333L11 335.5L19.5 335.5" stroke="#000" stroke-width="1" fill="none"/><path d="M19.8 333L30.6 352.6" stroke="#fff" stroke-width="1" fill="none"/><path d="M102.5 332.5L384 332.5" stroke="#000" stroke-width="1.3" fill="none"/><path d="M98 342L100 351.500L170 351.500L180 332.500M173 345L175 351.500L238 351.500L244.500 332.500M238 345L240 351.500L324 351.500L333 332.500" stroke="#000" stroke-width="1.2" fill="none"/></svg>
<span class="t" style="left:491.0px;top:891.5px;font-size:11px;line-height:13px;color:#000;font-weight:bold;transform:scaleX(1.088);">Worksheet</span>
<span class="t" style="left:566.0px;top:891.5px;font-size:11px;line-height:13px;color:#000;transform:scaleX(0.981);">Attachments</span>
<span class="t" style="left:644.0px;top:891.5px;font-size:11px;line-height:13px;color:#000;transform:scaleX(0.953);">Dynamics</span>
<span class="t" style="left:710.5px;top:891.5px;font-size:11px;line-height:13px;color:#000;transform:scaleX(0.967);">User Variables</span>
<div class="a " style="left:478px;top:915px;width:353px;height:15px;background:#008000;border-top:1px solid #404040;"></div>
<span class="t" style="left:647.5px;top:916.5px;font-size:11px;line-height:13px;color:#000;transform:scaleX(0.943);">OK</span>
<div class="a btn2" style="left:478px;top:938px;width:88px;height:23px;"></div>
<span class="t" style="left:506.0px;top:943px;font-size:11px;line-height:13px;color:#000;transform:scaleX(1.006);">Delete</span>
<div class="a btn2" style="left:576px;top:938px;width:168px;height:23px;"></div>
<span class="t" style="left:596.5px;top:943px;font-size:11px;line-height:13px;color:#000;transform:scaleX(0.939);">Define from Other Stream...</span>
<div class="a " style="left:755px;top:938px;width:78px;height:23px;border:1px solid #000;"></div>
<div class="a btn2" style="left:756px;top:939px;width:38px;height:21px;"></div>
<div class="a btn2" style="left:794px;top:939px;width:38px;height:21px;"></div>
<svg style="left:768px;top:944px" width="14" height="11"><path d="M13 3.5L7 3.5L7 0.8L1 5.5L7 10.2L7 7.5L13 7.5Z" fill="#008080" stroke="#000" stroke-width="1"/></svg>
<svg style="left:806px;top:944px" width="14" height="11"><path d="M1 3.5L7 3.5L7 0.8L13 5.5L7 10.2L7 7.5L1 7.5Z" fill="#008080" stroke="#000" stroke-width="1"/></svg>
<div class="a win" style="left:879px;top:548px;width:388px;height:430px;"></div>
<div class="a tgi" style="left:883px;top:552px;width:380px;height:18px;"></div>
<svg style="left:885px;top:553px" width="17" height="8"><path d="M0 1.5L9 1.5L9 4.5L0 4.5Z" fill="#0000ff"/><path d="M8 0L16 3L8 7L10 3.5Z" fill="#0000c0" stroke="#000" stroke-width="0.6"/></svg>
<span class="t" style="left:902.5px;top:555px;font-size:11px;line-height:13px;color:#d4d0c8;font-weight:bold;transform:scaleX(1.063);">Charge R170</span>
<div class="a btn" style="left:1211px;top:554px;width:16px;height:14px;"></div>
<div class="a " style="left:1215px;top:563px;width:6px;height:2px;background:#000;"></div>
<div class="a btn" style="left:1227px;top:554px;width:16px;height:14px;"></div>
<div class="a " style="left:1230px;top:556px;width:9px;height:9px;border:1px solid #000;border-top:2px solid #000;"></div>
<div class="a btn" style="left:1245px;top:554px;width:16px;height:14px;"></div>
<svg style="left:1249px;top:557px" width="8" height="7"><path d="M0.5 0L7.5 7M7.5 0L0.5 7" stroke="#000" stroke-width="1.6" fill="none"/></svg>
<div class="a " style="left:883px;top:571px;width:380px;height:30px;border:1px solid;border-color:#fff #404040 #000 #fff;"></div>
<div class="a " style="left:883px;top:599px;width:380px;height:1px;background:#808080;"></div>
<div class="a sunk" style="left:938px;top:576px;width:226px;height:21px;"></div>
<div class="a sunk" style="left:1168px;top:576px;width:90px;height:21px;background:#c0c0c0;"></div>
<div class="a btn2" style="left:1239px;top:578px;width:17px;height:17px;"></div>
<svg style="left:1244px;top:585px" width="8" height="4"><path d="M0 0L8 0L4 4Z" fill="#fff"/></svg>
<svg style="left:1243px;top:584px" width="8" height="4"><path d="M0 0L8 0L4 4Z" fill="#808080"/></svg>
<div class="a " style="left:884px;top:604px;width:379px;height:277px;border:1px solid;border-color:#fff #000 #000 #fff;box-shadow:inset -1px -1px #808080;"></div>
<div class="a rais1" style="left:892px;top:612px;width:105px;height:260px;"></div>
<div class="a sunk1" style="left:894px;top:634px;width:101px;height:237px;"></div>
<span class="t" style="left:913.0px;top:619px;font-size:11px;line-height:13px;color:#000;font-weight:bold;transform:scaleX(1.088);">Worksheet</span>
<span class="t" style="left:899.3px;top:640.5px;font-size:11px;line-height:13px;color:#000;font-weight:bold;transform:scaleX(1.027);">Conditions</span>
<span class="t" style="left:899.3px;top:661.5px;font-size:11px;line-height:13px;color:#000;transform:scaleX(0.937);">Properties</span>
<span class="t" style="left:899.3px;top:682.5px;font-size:11px;line-height:13px;color:#000;transform:scaleX(0.948);">Composition</span>
<span class="t" style="left:899.3px;top:703.5px;font-size:11px;line-height:13px;color:#000;transform:scaleX(0.974);">Notes</span>
<span class="t" style="left:899.3px;top:724.5px;font-size:11px;line-height:13px;color:#000;transform:scaleX(0.980);">K Value</span>
<div class="a " style="left:1003px;top:614px;width:250px;height:188px;border:1px solid;border-color:#808080 #fff #fff #808080;box-shadow:inset 1px 1px #404040;"></div>
<div class="a " style="left:1005px;top:630px;width:246px;height:1px;background:#808080;"></div>
<span class="t" style="left:1005.5px;top:617px;font-size:11px;line-height:13px;color:#000;transform:scaleX(0.953);">Stream Name</span>
<span class="t" style="left:1178.5px;top:617.5px;font-size:11px;line-height:13px;color:#0000ff;transform:scaleX(0.985);">Charge R170</span>
<div class="a " style="left:1005px;top:645px;width:246px;height:1px;background:#808080;"></div>
<span class="t" style="left:1005.5px;top:632px;font-size:11px;line-height:13px;color:#000;transform:scaleX(0.992);">Vapour / Phase Fraction</span>
<span class="t" style="left:1203.8px;top:632.5px;font-size:11px;line-height:13px;color:#000;transform:scaleX(0.985);">1.00000</span>
<div class="a " style="left:1005px;top:660px;width:246px;height:1px;background:#808080;"></div>
<span class="t" style="left:1005.5px;top:647px;font-size:11px;line-height:13px;color:#000;transform:scaleX(0.976);">Temperature [C]</span>
<span class="t" style="left:1206.2px;top:647.5px;font-size:11px;line-height:13px;color:#000;transform:scaleX(0.985);">-76.374</span>
<div class="a " style="left:1005px;top:675px;width:246px;height:1px;background:#808080;"></div>
<span class="t" style="left:1005.5px;top:662px;font-size:11px;line-height:13px;color:#000;transform:scaleX(0.966);">Pressure [kPa]</span>
<span class="t" style="left:1211.4px;top:662.5px;font-size:11px;line-height:13px;color:#000;transform:scaleX(0.985);">111.13</span>
<div class="a " style="left:1005px;top:690px;width:246px;height:1px;background:#808080;"></div>
<span class="t" style="left:1005.5px;top:677px;font-size:11px;line-height:13px;color:#000;transform:scaleX(0.985);">Molar Flow [kgmole/h]</span>
<span class="t" style="left:1188.1px;top:677.5px;font-size:11px;line-height:13px;color:#000;transform:scaleX(0.985);">6.469e-002</span>
<div class="a " style="left:1145px;top:691px;width:104px;height:14px;background:#fff;"></div>
<div class="a " style="left:1005px;top:705px;width:246px;height:1px;background:#808080;"></div>
<span class="t" style="left:1005.5px;top:692px;font-size:11px;line-height:13px;color:#000;">Mass Flow [kg/h]</span>
<span class="t" style="left:1209.8px;top:692.5px;font-size:11px;line-height:13px;color:#000;transform:scaleX(0.985);">1.9453</span>
<div class="a " style="left:1005px;top:720px;width:246px;height:1px;background:#808080;"></div>
<span class="t" style="left:1005.5px;top:707px;font-size:11px;line-height:13px;color:#000;transform:scaleX(0.976);">Liquid Volume Flow [m3/h]</span>
<span class="t" style="left:1188.1px;top:707.5px;font-size:11px;line-height:13px;color:#000;transform:scaleX(0.985);">5.467e-003</span>
<div class="a " style="left:1005px;top:735px;width:246px;height:1px;background:#808080;"></div>
<span class="t" style="left:1005.5px;top:722px;font-size:11px;line-height:13px;color:#000;transform:scaleX(0.982);">Molar Enthalpy [kJ/kgmole]</span>
<span class="t" style="left:1181.8px;top:722.5px;font-size:11px;line-height:13px;color:#000;transform:scaleX(0.985);">-8.940e+004</span>
<div class="a " style="left:1005px;top:750px;width:246px;height:1px;background:#808080;"></div>
<span class="t" style="left:1005.5px;top:737px;font-size:11px;line-height:13px;color:#000;transform:scaleX(0.970);">Molar Entropy [kJ/kgmole-C]</span>
<span class="t" style="left:1209.8px;top:737.5px;font-size:11px;line-height:13px;color:#000;transform:scaleX(0.985);">235.80</span>
<div class="a " style="left:1005px;top:765px;width:246px;height:1px;background:#808080;"></div>
<span class="t" style="left:1005.5px;top:752px;font-size:11px;line-height:13px;color:#000;transform:scaleX(1.014);">Heat Flow [kJ/h]</span>
<span class="t" style="left:1181.8px;top:752.5px;font-size:11px;line-height:13px;color:#000;transform:scaleX(0.985);">-5.7838e+03</span>
<div class="a " style="left:1005px;top:780px;width:246px;height:1px;background:#808080;"></div>
<span class="t" style="left:1005.5px;top:767px;font-size:11px;line-height:13px;color:#000;transform:scaleX(0.986);">Std Liq Vol Flow [m3/h]</span>
<span class="t" style="left:1188.1px;top:767.5px;font-size:11px;line-height:13px;color:#000;transform:scaleX(0.985);">5.438e-003</span>
<div class="a " style="left:1143px;top:616px;width:2px;height:169px;background:#000;"></div>
<div class="a " style="left:1249px;top:616px;width:1px;height:169px;background:#808080;"></div>
<div class="a " style="left:1005px;top:785px;width:246px;height:15px;background:#c0c0c0;"></div>
<div class="a btn2" style="left:1005px;top:785px;width:16px;height:15px;"></div>
<svg style="left:1011px;top:788px" width="4" height="8"><path d="M4 0L4 8L0 4Z" fill="#000"/></svg>
<div class="a btn2" style="left:1237px;top:785px;width:14px;height:15px;"></div>
<svg style="left:1242px;top:788px" width="4" height="8"><path d="M0 0L0 8L4 4Z" fill="#000"/></svg>
<div class="a btn2" style="left:1021px;top:785px;width:16px;height:15px;"></div>
<svg style="left:879px;top:548px" width="388" height="360"><path d="M5 332.5L19 332.5L30 354L92 354L102.5 332.5" stroke="#000" stroke-width="1.3" fill="none"/><path d="M11 333L11 335.5L19.5 335.5" stroke="#000" stroke-width="1" fill="none"/><path d="M19.8 333L30.6 352.6" stroke="#fff" stroke-width="1" fill="none"/><path d="M102.5 332.5L384 332.5" stroke="#000" stroke-width="1.3" fill="none"/><path d="M98 342L100 351.500L170 351.500L180 332.500M173 345L175 351.500L238 351.500L244.500 332.500M238 345L240 351.500L324 351.500L333 332.500" stroke="#000" stroke-width="1.2" fill="none"/></svg>
<span class="t" style="left:908.0px;top:884.5px;font-size:11px;line-height:13px;color:#000;font-weight:bold;transform:scaleX(1.088);">Worksheet</span>
<span class="t" style="left:983.0px;top:884.5px;font-size:11px;line-height:13px;color:#000;transform:scaleX(0.981);">Attachments</span>
<span class="t" style="left:1061.0px;top:884.5px;font-size:11px;line-height:13px;color:#000;transform:scaleX(0.953);">Dynamics</span>
<span class="t" style="left:1127.5px;top:884.5px;font-size:11px;line-height:13px;color:#000;transform:scaleX(0.967);">User Variables</span>
<div class="a " style="left:895px;top:908px;width:353px;height:15px;background:#008000;border-top:1px solid #404040;"></div>
<span class="t" style="left:1064.5px;top:909.5px;font-size:11px;line-height:13px;color:#000;transform:scaleX(0.943);">OK</span>
<div class="a btn2" style="left:895px;top:931px;width:88px;height:23px;"></div>
<span class="t" style="left:923.0px;top:936px;font-size:11px;line-height:13px;color:#000;transform:scaleX(1.006);">Delete</span>
<div class="a btn2" style="left:993px;top:931px;width:168px;height:23px;"></div>
<span class="t" style="left:1013.5px;top:936px;font-size:11px;line-height:13px;color:#000;transform:scaleX(0.939);">Define from Other Stream...</span>
<div class="a " style="left:1172px;top:931px;width:78px;height:23px;border:1px solid #000;"></div>
<div class="a btn2" style="left:1173px;top:932px;width:38px;height:21px;"></div>
<div class="a btn2" style="left:1211px;top:932px;width:38px;height:21px;"></div>
<svg style="left:1185px;top:937px" width="14" height="11"><path d="M13 3.5L7 3.5L7 0.8L1 5.5L7 10.2L7 7.5L13 7.5Z" fill="#008080" stroke="#000" stroke-width="1"/></svg>
<svg style="left:1223px;top:937px" width="14" height="11"><path d="M1 3.5L7 3.5L7 0.8L13 5.5L7 10.2L7 7.5L1 7.5Z" fill="#008080" stroke="#000" stroke-width="1"/></svg>
<div class="a win" style="left:16px;top:256px;width:426px;height:348px;"></div>
<div class="a tg" style="left:19px;top:259px;width:420px;height:18px;"></div>
<svg style="left:21px;top:260px" width="16" height="16"><rect x="8" y="2" width="7" height="11" rx="1" fill="#c0c0c0" stroke="#c8b400" stroke-width="1.2"/><path d="M0 5L0 15L11 10Z" fill="#00a0a0"/><path d="M0 5L11 10L0 10Z" fill="#006868"/><path d="M2 1L11 8" stroke="#fff" stroke-width="1.4"/><path d="M5 1L12 7" stroke="#e8e000" stroke-width="1.2"/><path d="M3 2L10 9" stroke="#000" stroke-width="0.8"/></svg>
<span class="t" style="left:38.0px;top:262px;font-size:11px;line-height:13px;color:#fff;font-weight:bold;transform:scaleX(1.073);">Input Composition for Stream: Charge R170</span>
<div class="a btn" style="left:421px;top:261px;width:16px;height:14px;"></div>
<svg style="left:425px;top:264px" width="8" height="7"><path d="M0.5 0L7.5 7M7.5 0L0.5 7" stroke="#000" stroke-width="1.6" fill="none"/></svg>
<div class="a " style="left:19px;top:278px;width:420px;height:30px;border:1px solid;border-color:#fff #404040 #000 #fff;"></div>
<div class="a " style="left:19px;top:306px;width:420px;height:1px;background:#808080;"></div>
<div class="a sunk" style="left:74px;top:283px;width:265px;height:21px;background:#c0c0c0;"></div>
<span class="t" style="left:78.0px;top:287px;font-size:11px;line-height:13px;color:#000;transform:scaleX(0.980);">0.0000</span>
<div class="a sunk" style="left:344px;top:283px;width:90px;height:21px;background:#c0c0c0;"></div>
<div class="a btn2" style="left:415px;top:285px;width:17px;height:17px;"></div>
<svg style="left:420px;top:292px" width="8" height="4"><path d="M0 0L8 0L4 4Z" fill="#fff"/></svg>
<svg style="left:419px;top:291px" width="8" height="4"><path d="M0 0L8 0L4 4Z" fill="#808080"/></svg>
<div class="a " style="left:26px;top:318px;width:246px;height:247px;border:2px solid;border-color:#404040 #fff #fff #404040;border-right-width:1px;border-bottom-width:1px;"></div>
<span class="t" style="left:156.0px;top:319px;font-size:11px;line-height:13px;color:#000;transform:scaleX(0.954);">MassFraction</span>
<div class="a " style="left:28px;top:330px;width:228px;height:2px;background:#000;"></div>
<div class="a " style="left:243px;top:320px;width:1px;height:10px;background:#808080;"></div>
<div class="a " style="left:28px;top:344px;width:228px;height:1px;background:#808080;"></div>
<span class="t" style="left:27.5px;top:331px;font-size:11px;line-height:13px;color:#000;transform:scaleX(0.950);clip-path:inset(0 0 0px 0);">Refrig-22</span>
<span class="t" style="left:204.5px;top:332px;font-size:11px;line-height:13px;color:#0000ff;transform:scaleX(0.980);clip-path:inset(0 0 0px 0);">0.0000</span>
<div class="a " style="left:28px;top:357px;width:228px;height:1px;background:#808080;"></div>
<span class="t" style="left:27.5px;top:344px;font-size:11px;line-height:13px;color:#000;transform:scaleX(0.950);clip-path:inset(0 0 0px 0);">Refrig-114</span>
<span class="t" style="left:204.5px;top:345px;font-size:11px;line-height:13px;color:#0000ff;transform:scaleX(0.980);clip-path:inset(0 0 0px 0);">0.0000</span>
<div class="a " style="left:28px;top:370px;width:228px;height:1px;background:#808080;"></div>
<span class="t" style="left:27.5px;top:357px;font-size:11px;line-height:13px;color:#000;transform:scaleX(0.950);clip-path:inset(0 0 0px 0);">Refrig-170</span>
<span class="t" style="left:204.5px;top:358px;font-size:11px;line-height:13px;color:#0000ff;transform:scaleX(0.980);clip-path:inset(0 0 0px 0);">1.0000</span>
<div class="a " style="left:28px;top:383px;width:228px;height:1px;background:#808080;"></div>
<span class="t" style="left:27.5px;top:370px;font-size:11px;line-height:13px;color:#000;transform:scaleX(0.950);clip-path:inset(0 0 0px 0);">Refrig-290</span>
<span class="t" style="left:204.5px;top:371px;font-size:11px;line-height:13px;color:#0000ff;transform:scaleX(0.980);clip-path:inset(0 0 0px 0);">0.0000</span>
<div class="a " style="left:28px;top:396px;width:228px;height:1px;background:#808080;"></div>
<span class="t" style="left:27.5px;top:383px;font-size:11px;line-height:13px;color:#000;transform:scaleX(0.950);clip-path:inset(0 0 0px 0);">Refrig-500</span>
<span class="t" style="left:204.5px;top:384px;font-size:11px;line-height:13px;color:#0000ff;transform:scaleX(0.980);clip-path:inset(0 0 0px 0);">0.0000</span>
<div class="a " style="left:28px;top:409px;width:228px;height:1px;background:#808080;"></div>
<span class="t" style="left:27.5px;top:396px;font-size:11px;line-height:13px;color:#000;transform:scaleX(0.950);clip-path:inset(0 0 0px 0);">Refrig-502</span>
<span class="t" style="left:204.5px;top:397px;font-size:11px;line-height:13px;color:#0000ff;transform:scaleX(0.980);clip-path:inset(0 0 0px 0);">0.0000</span>
<div class="a " style="left:28px;top:422px;width:228px;height:1px;background:#808080;"></div>
<span class="t" style="left:27.5px;top:409px;font-size:11px;line-height:13px;color:#000;transform:scaleX(0.950);clip-path:inset(0 0 0px 0);">Refrig-503</span>
<span class="t" style="left:204.5px;top:410px;font-size:11px;line-height:13px;color:#0000ff;transform:scaleX(0.980);clip-path:inset(0 0 0px 0);">0.0000</span>
<div class="a " style="left:28px;top:435px;width:228px;height:1px;background:#808080;"></div>
<span class="t" style="left:27.5px;top:422px;font-size:11px;line-height:13px;color:#000;transform:scaleX(0.950);clip-path:inset(0 0 0px 0);">Refrig-600</span>
<span class="t" style="left:204.5px;top:423px;font-size:11px;line-height:13px;color:#0000ff;transform:scaleX(0.980);clip-path:inset(0 0 0px 0);">0.0000</span>
<div class="a " style="left:28px;top:448px;width:228px;height:1px;background:#808080;"></div>
<span class="t" style="left:27.5px;top:435px;font-size:11px;line-height:13px;color:#000;transform:scaleX(0.950);clip-path:inset(0 0 0px 0);">Refrig-702</span>
<span class="t" style="left:204.5px;top:436px;font-size:11px;line-height:13px;color:#0000ff;transform:scaleX(0.980);clip-path:inset(0 0 0px 0);">0.0000</span>
<div class="a " style="left:28px;top:461px;width:228px;height:1px;background:#808080;"></div>
<span class="t" style="left:27.5px;top:448px;font-size:11px;line-height:13px;color:#000;transform:scaleX(0.950);clip-path:inset(0 0 0px 0);">Refrig-704</span>
<span class="t" style="left:204.5px;top:449px;font-size:11px;line-height:13px;color:#0000ff;transform:scaleX(0.980);clip-path:inset(0 0 0px 0);">0.0000</span>
<div class="a " style="left:28px;top:474px;width:228px;height:1px;background:#808080;"></div>
<span class="t" style="left:27.5px;top:461px;font-size:11px;line-height:13px;color:#000;transform:scaleX(0.950);clip-path:inset(0 0 0px 0);">Refrig-717</span>
<span class="t" style="left:204.5px;top:462px;font-size:11px;line-height:13px;color:#0000ff;transform:scaleX(0.980);clip-path:inset(0 0 0px 0);">0.0000</span>
<div class="a " style="left:28px;top:487px;width:228px;height:1px;background:#808080;"></div>
<span class="t" style="left:27.5px;top:474px;font-size:11px;line-height:13px;color:#000;transform:scaleX(0.950);clip-path:inset(0 0 0px 0);">Refrig-718</span>
<span class="t" style="left:204.5px;top:475px;font-size:11px;line-height:13px;color:#0000ff;transform:scaleX(0.980);clip-path:inset(0 0 0px 0);">0.0000</span>
<div class="a " style="left:28px;top:500px;width:228px;height:1px;background:#808080;"></div>
<span class="t" style="left:27.5px;top:487px;font-size:11px;line-height:13px;color:#000;transform:scaleX(0.950);clip-path:inset(0 0 0px 0);">Refrig-720</span>
<span class="t" style="left:204.5px;top:488px;font-size:11px;line-height:13px;color:#0000ff;transform:scaleX(0.980);clip-path:inset(0 0 0px 0);">0.0000</span>
<div class="a " style="left:28px;top:513px;width:228px;height:1px;background:#808080;"></div>
<span class="t" style="left:27.5px;top:500px;font-size:11px;line-height:13px;color:#000;transform:scaleX(0.950);clip-path:inset(0 0 0px 0);">Refrig-728</span>
<span class="t" style="left:204.5px;top:501px;font-size:11px;line-height:13px;color:#0000ff;transform:scaleX(0.980);clip-path:inset(0 0 0px 0);">0.0000</span>
<div class="a " style="left:28px;top:526px;width:228px;height:1px;background:#808080;"></div>
<span class="t" style="left:27.5px;top:513px;font-size:11px;line-height:13px;color:#000;transform:scaleX(0.950);clip-path:inset(0 0 0px 0);">Refrig-729</span>
<span class="t" style="left:204.5px;top:514px;font-size:11px;line-height:13px;color:#0000ff;transform:scaleX(0.980);clip-path:inset(0 0 0px 0);">0.0000</span>
<div class="a " style="left:28px;top:539px;width:228px;height:1px;background:#808080;"></div>
<span class="t" style="left:27.5px;top:526px;font-size:11px;line-height:13px;color:#000;transform:scaleX(0.950);clip-path:inset(0 0 0px 0);">Refrig-732</span>
<span class="t" style="left:204.5px;top:527px;font-size:11px;line-height:13px;color:#0000ff;transform:scaleX(0.980);clip-path:inset(0 0 0px 0);">0.0000</span>
<div class="a " style="left:28px;top:552px;width:228px;height:1px;background:#808080;"></div>
<span class="t" style="left:27.5px;top:539px;font-size:11px;line-height:13px;color:#000;transform:scaleX(0.950);clip-path:inset(0 0 0px 0);">Refrig-740</span>
<span class="t" style="left:204.5px;top:540px;font-size:11px;line-height:13px;color:#0000ff;transform:scaleX(0.980);clip-path:inset(0 0 0px 0);">0.0000</span>
<span class="t" style="left:27.5px;top:552px;font-size:11px;line-height:13px;color:#000;transform:scaleX(0.950);clip-path:inset(0 0 1px 0);">Refrig-744</span>
<span class="t" style="left:204.5px;top:553px;font-size:11px;line-height:13px;color:#0000ff;transform:scaleX(0.980);clip-path:inset(0 0 2px 0);">0.0000</span>
<div class="a " style="left:130px;top:320px;width:2px;height:244px;background:#000;"></div>
<div class="a " style="left:243px;top:332px;width:1px;height:232px;background:#808080;"></div>
<div class="a " style="left:255px;top:320px;width:1px;height:244px;background:#808080;"></div>
<div class="a " style="left:132px;top:332px;width:112px;height:13px;border:1px solid #404040;box-shadow:inset 1px 1px #404040;"></div>
<div class="a " style="left:256px;top:320px;width:15px;height:244px;background:#c0c0c0;"></div>
<div class="a btn2" style="left:256px;top:320px;width:15px;height:14px;"></div>
<svg style="left:259px;top:325px" width="8" height="4"><path d="M0 4L4 0L8 4Z" fill="#000"/></svg>
<div class="a btn2" style="left:256px;top:549px;width:15px;height:15px;"></div>
<svg style="left:259px;top:555px" width="8" height="4"><path d="M0 0L8 0L4 4Z" fill="#000"/></svg>
<div class="a btn2" style="left:256px;top:335px;width:15px;height:15px;"></div>
<span class="t" style="left:97.0px;top:575px;font-size:11px;line-height:13px;color:#000;transform:scaleX(1.032);">Total</span>
<div class="a sunk" style="left:137px;top:571px;width:135px;height:22px;"></div>
<span class="t" style="left:140.0px;top:574px;font-size:11px;line-height:13px;color:#000;transform:scaleX(0.980);">1.0000</span>
<div class="a etch" style="left:278px;top:322px;width:153px;height:129px;"></div>
<div class="a " style="left:283px;top:320px;width:89px;height:6px;background:#d4d0c8;"></div>
<span class="t" style="left:285.0px;top:315.5px;font-size:11px;line-height:13px;color:#000;transform:scaleX(0.944);">Composition Basis</span>
<svg style="left:285.5px;top:331.5px" width="13" height="13"><circle cx="6.5" cy="6.5" r="5.5" fill="#fff" stroke="#808080" stroke-width="1"/><path d="M2.6 10.4A5.5 5.5 0 0 0 10.4 2.6" stroke="#fff" stroke-width="1" fill="none"/><path d="M3.3 9.7A4.5 4.5 0 0 1 9.7 3.3" stroke="#404040" stroke-width="1" fill="none"/></svg>
<span class="t" style="left:303.5px;top:331px;font-size:11px;line-height:13px;color:#000;transform:scaleX(0.956);">Mole Fra<u>c</u>tions</span>
<svg style="left:285.5px;top:351.2px" width="13" height="13"><circle cx="6.5" cy="6.5" r="5.5" fill="#fff" stroke="#808080" stroke-width="1"/><path d="M2.6 10.4A5.5 5.5 0 0 0 10.4 2.6" stroke="#fff" stroke-width="1" fill="none"/><path d="M3.3 9.7A4.5 4.5 0 0 1 9.7 3.3" stroke="#404040" stroke-width="1" fill="none"/><circle cx="6.5" cy="6.5" r="2" fill="#000"/></svg>
<span class="t" style="left:303.5px;top:350.7px;font-size:11px;line-height:13px;color:#000;transform:scaleX(0.952);">Mass Fracti<u>o</u>ns</span>
<svg style="left:285.5px;top:370.2px" width="13" height="13"><circle cx="6.5" cy="6.5" r="5.5" fill="#fff" stroke="#808080" stroke-width="1"/><path d="M2.6 10.4A5.5 5.5 0 0 0 10.4 2.6" stroke="#fff" stroke-width="1" fill="none"/><path d="M3.3 9.7A4.5 4.5 0 0 1 9.7 3.3" stroke="#404040" stroke-width="1" fill="none"/></svg>
<span class="t" style="left:303.5px;top:369.7px;font-size:11px;line-height:13px;color:#000;transform:scaleX(0.954);">Liq <u>V</u>olume Fractions</span>
<svg style="left:285.5px;top:390.2px" width="13" height="13"><circle cx="6.5" cy="6.5" r="5.5" fill="#fff" stroke="#808080" stroke-width="1"/><path d="M2.6 10.4A5.5 5.5 0 0 0 10.4 2.6" stroke="#fff" stroke-width="1" fill="none"/><path d="M3.3 9.7A4.5 4.5 0 0 1 9.7 3.3" stroke="#404040" stroke-width="1" fill="none"/></svg>
<span class="t" style="left:303.5px;top:389.7px;font-size:11px;line-height:13px;color:#000;transform:scaleX(0.953);"><u>M</u>ole Flows</span>
<svg style="left:285.5px;top:409.2px" width="13" height="13"><circle cx="6.5" cy="6.5" r="5.5" fill="#fff" stroke="#808080" stroke-width="1"/><path d="M2.6 10.4A5.5 5.5 0 0 0 10.4 2.6" stroke="#fff" stroke-width="1" fill="none"/><path d="M3.3 9.7A4.5 4.5 0 0 1 9.7 3.3" stroke="#404040" stroke-width="1" fill="none"/></svg>
<span class="t" style="left:303.5px;top:408.7px;font-size:11px;line-height:13px;color:#000;transform:scaleX(0.947);">M<u>a</u>ss Flows</span>
<svg style="left:285.5px;top:429.3px" width="13" height="13"><circle cx="6.5" cy="6.5" r="5.5" fill="#fff" stroke="#808080" stroke-width="1"/><path d="M2.6 10.4A5.5 5.5 0 0 0 10.4 2.6" stroke="#fff" stroke-width="1" fill="none"/><path d="M3.3 9.7A4.5 4.5 0 0 1 9.7 3.3" stroke="#404040" stroke-width="1" fill="none"/></svg>
<span class="t" style="left:303.5px;top:428.8px;font-size:11px;line-height:13px;color:#000;transform:scaleX(0.951);">Li<u>q</u> Volume Flows</span>
<div class="a etch" style="left:278px;top:465px;width:153px;height:70px;"></div>
<div class="a " style="left:283px;top:463px;width:101px;height:6px;background:#d4d0c8;"></div>
<span class="t" style="left:285.0px;top:458.5px;font-size:11px;line-height:13px;color:#000;transform:scaleX(0.932);">Composition Controls</span>
<div class="a btn2" style="left:285px;top:478px;width:137px;height:22px;"></div>
<span class="t" style="left:339.5px;top:482.5px;font-size:11px;line-height:13px;color:#000;transform:scaleX(0.974);">E<u>r</u>ase</span>
<div class="a btn2" style="left:285px;top:507px;width:137px;height:23px;"></div>
<span class="t" style="left:330.5px;top:511.5px;font-size:11px;line-height:13px;color:#000;transform:scaleX(0.929);">Normali<u>z</u>e</span>
<div class="a btn2" style="left:285px;top:543px;width:137px;height:22px;"></div>
<span class="t" style="left:337.0px;top:547.5px;font-size:11px;line-height:13px;color:#000;transform:scaleX(0.964);">Cancel</span>
<div class="a " style="left:285px;top:572px;width:137px;height:23px;border:1px solid #000;"></div>
<div class="a btn2" style="left:286px;top:573px;width:135px;height:21px;"></div>
<span class="t" style="left:346.0px;top:576.5px;font-size:11px;line-height:13px;color:#000;transform:scaleX(0.943);">OK</span>
<div class="a win" style="left:1283px;top:292px;width:106px;height:574px;"></div>
<div class="a tg" style="left:1286px;top:294px;width:100px;height:15px;"></div>
<span class="t" style="left:1287.5px;top:295px;font-size:11px;line-height:13px;color:#fff;font-weight:bold;transform:scaleX(1.085);">Case (Main)</span>
<div class="a btn" style="left:1374px;top:296px;width:10px;height:11px;"></div>
<svg style="left:1376px;top:298px" width="6" height="6"><path d="M0.5 0.5L5.5 5.5M5.5 0.5L0.5 5.5" stroke="#000" stroke-width="1.1"/></svg>
<div class="a " style="left:1287px;top:333px;width:99px;height:1px;background:#808080;"></div>
<div class="a " style="left:1287px;top:334px;width:99px;height:1px;background:#fff;"></div>
<div class="a " style="left:1287px;top:357px;width:99px;height:1px;background:#808080;"></div>
<div class="a " style="left:1287px;top:358px;width:99px;height:1px;background:#fff;"></div>
<div class="a " style="left:1287px;top:609px;width:99px;height:1px;background:#808080;"></div>
<div class="a " style="left:1287px;top:610px;width:99px;height:1px;background:#fff;"></div>
<div class="a " style="left:1287px;top:737px;width:99px;height:1px;background:#808080;"></div>
<div class="a " style="left:1287px;top:738px;width:99px;height:1px;background:#fff;"></div>
<svg style="left:0;top:0" width="1400" height="1023"><defs><clipPath id="plus"><path d="M1299.5 312.5L1306 312.5L1306 318.5L1311 318.5L1311 324L1306 324L1306 329.500L1299.5 329.500L1299.5 324L1294 324L1294 318.5L1299.5 318.5Z"/></clipPath></defs><g clip-path="url(#plus)" stroke="#00f000" stroke-width="1.100"><path d="M1266.4 308L1290.4 332"/><path d="M1269.8 308L1293.8 332"/><path d="M1273.2 308L1297.2 332"/><path d="M1276.6 308L1300.6 332"/><path d="M1280.0 308L1304.0 332"/><path d="M1283.4 308L1307.4 332"/><path d="M1286.8 308L1310.8 332"/><path d="M1290.2 308L1314.2 332"/><path d="M1293.6 308L1317.6 332"/><path d="M1297.0 308L1321.0 332"/><path d="M1300.4 308L1324.4 332"/><path d="M1303.8 308L1327.8 332"/><path d="M1307.2 308L1331.2 332"/><path d="M1310.6 308L1334.6 332"/><path d="M1314.0 308L1338.0 332"/><path d="M1317.4 308L1341.4 332"/></g><path d="M1299.5 312.5L1306 312.5L1306 318.5L1311 318.5L1311 324L1306 324L1306 329.500L1299.5 329.500L1299.5 324L1294 324L1294 318.5L1299.5 318.5Z" fill="none" stroke="#000" stroke-width="1" stroke-dasharray="1 1.800"/><path d="M1331.5 320L1331.5 316.5C1331.5 311.5 1339.5 311.5 1339.5 316.5L1339.5 320" stroke="#000" stroke-width="1.8" fill="none"/><path d="M1327.5 320L1329 318.5L1342 318.5L1343.5 320L1343.5 329.5L1327.5 329.5Z" fill="#808080" stroke="#000" stroke-width="1.2"/><circle cx="1335.5" cy="324" r="2.6" fill="#fff" stroke="#000" stroke-width="0.8"/><rect x="1335" y="321.5" width="1.2" height="3" fill="#000"/><path d="M1362.5 312L1378 327.5" stroke="#000" stroke-width="1"/><path d="M1360.5 313L1376.5 329" stroke="#ff0000" stroke-width="1"/><path d="M1377.500 313L1360.500 329.5" stroke="#ff0000" stroke-width="1.600" stroke-dasharray="1.600 1.400"/><path d="M1295.5 343L1315 343L1313 338.5L1326.500 345.5L1313 352.5L1315 348.5L1295.5 348.5Z" fill="#0000ff" stroke="#000" stroke-width="0.9"/><path d="M1344.5 343L1364 343L1362 338.500L1375.500 345.5L1362 352.5L1364 348.5L1344.5 348.5Z" fill="#ff0000" stroke="#000" stroke-width="0.9"/><rect x="1295.5" y="363.5" width="10.5" height="20" rx="4" fill="#808080" stroke="#000" stroke-width="1.3"/><path d="M1296 367.5L1306 367.5M1296 379.5L1306 379.5" stroke="#000" stroke-width="1"/><path d="M1287 371.5L1295 371.5" stroke="#0000ff" stroke-width="1.3" fill="none"/><path d="M1293 369.7L1293 373.3" stroke="#0000ff" stroke-width="1.3"/><path d="M1300.5 363L1300.5 361.5L1316 361.5" stroke="#0000ff" stroke-width="1.3" fill="none"/><path d="M1313.5 359.7L1313.5 363.3" stroke="#0000ff" stroke-width="1.3"/><path d="M1300.5 384L1300.5 385.5L1316 385.5" stroke="#0000ff" stroke-width="1.3" fill="none"/><path d="M1313.5 383.7L1313.5 387.3" stroke="#0000ff" stroke-width="1.3"/><rect x="1323.5" y="364.5" width="22.5" height="10" rx="4" fill="#808080" stroke="#000" stroke-width="1.3"/><path d="M1326.500 365L1326.500 374M1343 365L1343 374" stroke="#000" stroke-width="1"/><rect x="1335.5" y="374.5" width="5" height="6" rx="1.500" fill="#808080" stroke="#000" stroke-width="1.200"/><path d="M1320 366L1320 370M1320 368.5L1323 368.5" stroke="#0000ff" stroke-width="1.3" fill="none"/><path d="M1346 371.5L1350 371.5" stroke="#0000ff" stroke-width="1.3" fill="none"/><path d="M1348 369.7L1348 373.3" stroke="#0000ff" stroke-width="1.3"/><path d="M1338 381L1338 382.5L1350 382.5" stroke="#0000ff" stroke-width="1.3" fill="none"/><path d="M1347.5 380.7L1347.5 384.3" stroke="#0000ff" stroke-width="1.3"/><path d="M1357.500 367L1357.500 383C1357.500 388 1377.500 388 1377.500 383L1377.500 367Z" fill="#808080" stroke="#000" stroke-width="1.300"/><ellipse cx="1367.5" cy="367" rx="10" ry="3.300" fill="#fff" stroke="#000" stroke-width="1.300"/><path d="M1367.500 367L1367.500 361.5L1382 361.5" stroke="#0000ff" stroke-width="1.3" fill="none"/><circle cx="1381" cy="361.5" r="1.800" fill="#0000ff"/><path d="M1357 371.5L1353 371.5" stroke="#0000ff" stroke-width="1.3" fill="none"/><path d="M1355 369.7L1355 373.3" stroke="#0000ff" stroke-width="1.3"/><path d="M1378 382.5L1383 382.5" stroke="#0000ff" stroke-width="1.3" fill="none"/><path d="M1381 380.7L1381 384.3" stroke="#0000ff" stroke-width="1.3"/><circle cx="1301.5" cy="403.5" r="10.2" fill="#808080" stroke="#000" stroke-width="1.300"/><path d="M1288.0 417L1295.5 409.5L1300.5 409.5L1297.5 401.5L1305.5 405L1302.5 397L1307.5 397L1315.0 390" stroke="#0000ff" stroke-width="1.3" fill="none"/><path d="M1311.0 390.500L1315.0 390L1314.5 394" stroke="#0000ff" stroke-width="1.2" fill="none"/><path d="M1287.0 403.5L1291.0 403.5" stroke="#0000ff" stroke-width="1.3" fill="none"/><path d="M1312.0 403.5L1316.5 403.5" stroke="#0000ff" stroke-width="1.3" fill="none"/><path d="M1314.5 401.7L1314.5 405.3" stroke="#0000ff" stroke-width="1.3"/><circle cx="1334.5" cy="403.5" r="10.2" fill="#808080" stroke="#000" stroke-width="1.300"/><path d="M1348.0 390L1340.5 397.5L1340.5 401.5L1333.5 398.5L1336.5 407.5L1328.5 404.5L1328.5 410L1321.5 416.500" stroke="#ff0000" stroke-width="1.3" fill="none"/><path d="M1325.5 417L1321.0 417L1321.5 412.5" stroke="#ff0000" stroke-width="1.3" fill="none"/><path d="M1320.0 403.5L1324.0 403.5" stroke="#0000ff" stroke-width="1.3" fill="none"/><path d="M1345.0 403.5L1349.5 403.5" stroke="#0000ff" stroke-width="1.3" fill="none"/><path d="M1347.5 401.7L1347.5 405.3" stroke="#0000ff" stroke-width="1.3"/><rect x="1359.500" y="391.500" width="14.500" height="24" fill="#808080" stroke="#000" stroke-width="1.300"/><path d="M1360.500 394L1362.500 398L1364.500 394L1366.500 398L1368.500 394L1370.500 398L1372.500 394" stroke="#ff0000" stroke-width="1" fill="none"/><path d="M1360.500 398L1362.500 394L1364.500 398L1366.500 394L1368.500 398L1370.500 394L1372.500 398" stroke="#ff0000" stroke-width="1" fill="none"/><path d="M1360.500 401.5L1362.500 405.5L1364.500 401.5L1366.500 405.5L1368.500 401.5L1370.500 405.5L1372.500 401.5" stroke="#0000ff" stroke-width="1" fill="none"/><path d="M1360.500 405.5L1362.500 401.5L1364.500 405.5L1366.500 401.5L1368.500 405.5L1370.500 401.5L1372.500 405.5" stroke="#0000ff" stroke-width="1" fill="none"/><path d="M1360.500 408.5L1362.500 412.5L1364.500 408.5L1366.500 412.5L1368.500 408.5L1370.500 412.5L1372.500 408.5" stroke="#ff0000" stroke-width="1" fill="none"/><path d="M1360.500 412.5L1362.500 408.5L1364.500 412.5L1366.500 408.5L1368.500 412.5L1370.500 408.5L1372.500 412.5" stroke="#ff0000" stroke-width="1" fill="none"/><path d="M1353 395.5L1359 395.5" stroke="#0000ff" stroke-width="1.3" fill="none"/><path d="M1374 395.5L1383 395.5" stroke="#0000ff" stroke-width="1.3" fill="none"/><path d="M1381 393.7L1381 397.3" stroke="#0000ff" stroke-width="1.3"/><path d="M1353 403.5L1359 403.5" stroke="#0000ff" stroke-width="1.3" fill="none"/><path d="M1374 403.5L1383 403.5" stroke="#0000ff" stroke-width="1.3" fill="none"/><path d="M1353 410.5L1359 410.5" stroke="#0000ff" stroke-width="1.3" fill="none"/><path d="M1374 410.5L1383 410.5" stroke="#0000ff" stroke-width="1.3" fill="none"/><path d="M1381 408.7L1381 412.3" stroke="#0000ff" stroke-width="1.3"/><path d="M1355 401.7L1355 405.3" stroke="#0000ff" stroke-width="1.3"/><rect x="1295" y="427" width="18" height="13" fill="#fff" stroke="#000" stroke-width="1"/><path d="M1295 429.500L1313 429.500M1295 432L1313 432M1295 434.500L1313 434.500M1295 437L1313 437" stroke="#000" stroke-width="1"/><rect x="1291.500" y="425.500" width="3.500" height="16" fill="#808080" stroke="#000" stroke-width="1.200"/><rect x="1311.500" y="425.500" width="1.800" height="16" fill="#000"/><path d="M1313.500 427.500C1318 428 1318 439 1313.500 439.500Z" fill="#808080" stroke="#000" stroke-width="1"/><path d="M1308.500 420L1308.500 427" stroke="#0000ff" stroke-width="1.3" fill="none"/><path d="M1308.5 424L1308.5 424" stroke="#0000ff" stroke-width="1.3"/><path d="M1306.500 424.500L1310.500 424.500" stroke="#0000ff" stroke-width="1.3" fill="none"/><path d="M1298.500 441L1298.500 447" stroke="#0000ff" stroke-width="1.3" fill="none"/><path d="M1296.500 444.500L1300.500 444.500" stroke="#0000ff" stroke-width="1.3" fill="none"/><path d="M1291 429.5L1287 429.5" stroke="#0000ff" stroke-width="1.3" fill="none"/><path d="M1289 427.7L1289 431.3" stroke="#0000ff" stroke-width="1.3"/><path d="M1291 437.5L1287 437.5" stroke="#0000ff" stroke-width="1.3" fill="none"/><path d="M1289 435.7L1289 439.3" stroke="#0000ff" stroke-width="1.3"/><path d="M1328.500 422.500L1342.500 422.500L1342.500 437.500L1347.500 442L1347.500 447.500L1323.500 447.500L1323.500 442L1328.500 437.500Z" fill="#808080" stroke="#000" stroke-width="1.200"/><path d="M1328.500 437.500L1342.500 437.500M1336.500 438L1336.500 445" stroke="#000" stroke-width="1"/><path d="M1332.500 428.500L1332.500 424.500M1331 426L1332.500 424.500L1334 426M1338.500 428.500L1338.500 424.500M1337 426L1338.500 424.500L1340 426" stroke="#00ffff" stroke-width="1.2" fill="none"/><path d="M1330 433.500L1333 431.500L1336 433.500L1339 431.500L1341 433.500L1339 435.500L1336 433.500L1333 435.500Z" stroke="#0000ff" stroke-width="1" fill="none"/><path d="M1321 440.500L1326 440.500L1329 443.500L1344 443.500C1346.500 443.500 1346.500 441 1344 441L1327 441M1321 442.500L1325 442.500L1328 445.500L1344 445.500" stroke="#ff0000" stroke-width="1.1" fill="none"/><path d="M1362.500 443.500L1362.500 430L1366.500 427.500L1366.500 424.500L1371.500 424.500L1371.500 427.500L1375.500 430L1375.500 443.500Z" fill="#808080" stroke="#000" stroke-width="1.200"/><path d="M1359 429.500L1365 429.500L1366.500 428L1368 430.500L1370 428L1371.500 430.500L1373 429.500L1379 429.500" stroke="#0000ff" stroke-width="1.1" fill="none"/><path d="M1359 434.500L1365 434.500L1366.500 433L1368 435.500L1370 433L1371.500 435.500L1373 434.500L1379 434.500" stroke="#0000ff" stroke-width="1.1" fill="none"/><circle cx="1368.500" cy="440" r="2.500" fill="#ff0000"/><path d="M1368 438L1369 434.500L1370.500 438Z" fill="#ffff00"/><path d="M1289 475.500L1289 472L1292 470L1306 470L1309 472L1309 475.500Z" fill="#808080" stroke="#000" stroke-width="1.200"/><circle cx="1299" cy="463" r="9" fill="#808080" stroke="#000" stroke-width="1.200"/><path d="M1296 454L1312 453.500L1312 458.500L1306 458.500" fill="#808080" stroke="#000" stroke-width="1.200"/><path d="M1297 459C1303 459 1303 466.500 1297 466.500" stroke="#000" stroke-width="1.2" fill="none"/><path d="M1287 462.5L1299 462.5" stroke="#0000ff" stroke-width="1.3" fill="none"/><path d="M1297 460.7L1297 464.3" stroke="#0000ff" stroke-width="1.3"/><path d="M1312 455.5L1317 455.5" stroke="#0000ff" stroke-width="1.3" fill="none"/><path d="M1315 453.7L1315 457.3" stroke="#0000ff" stroke-width="1.3"/><path d="M1323.500 462.500L1343.500 456.500L1343.500 476.500L1323.500 470Z" fill="#808080" stroke="#000" stroke-width="1.300"/><path d="M1320 454.500L1326.500 454.500L1326.500 461" stroke="#0000ff" stroke-width="1.3" fill="none"/><path d="M1338.500 457.500L1338.500 453.500L1350 453.500" stroke="#0000ff" stroke-width="1.3" fill="none"/><path d="M1347.5 451.7L1347.5 455.3" stroke="#0000ff" stroke-width="1.3"/><path d="M1357.500 456.500L1377.500 462.500L1377.500 470L1357.500 476.500Z" fill="#808080" stroke="#000" stroke-width="1.300"/><path d="M1353 453.500L1362.500 453.500L1362.500 457.500" stroke="#0000ff" stroke-width="1.3" fill="none"/><path d="M1374.500 461.500L1374.500 454.500L1383 454.500" stroke="#0000ff" stroke-width="1.3" fill="none"/><path d="M1381 452.7L1381 456.3" stroke="#0000ff" stroke-width="1.3"/><path d="M1291 487.500L1311 487.500C1315 487.500 1315 492 1312 494L1312 498L1314 500C1314 503.500 1312 503.500 1310 503.500L1291 503.500C1287 503.500 1287 499 1290 497L1290 493L1288 491C1288 487.500 1289 487.500 1291 487.500Z" fill="#808080" stroke="#000" stroke-width="1.600"/><circle cx="1310" cy="491.500" r="2.300" fill="#fff" stroke="#000" stroke-width="0.800"/><circle cx="1292" cy="500" r="2.300" fill="#fff" stroke="#000" stroke-width="0.800"/><path d="M1287 495.5L1290 495.5" stroke="#0000ff" stroke-width="1.3" fill="none"/><path d="M1312 495.5L1317 495.5" stroke="#0000ff" stroke-width="1.3" fill="none"/><path d="M1315 493.7L1315 497.3" stroke="#0000ff" stroke-width="1.3"/><path d="M1289 493.7L1289 497.3" stroke="#0000ff" stroke-width="1.3"/><text x="1296" y="499.500" font-family="Liberation Sans" font-weight="bold" font-size="11" fill="#101010">G</text><path d="M1324 487.500L1344 487.500C1348 487.500 1348 492 1345 494L1345 498L1347 500C1347 503.500 1345 503.500 1343 503.500L1324 503.500C1320 503.500 1320 499 1323 497L1323 493L1321 491C1321 487.500 1322 487.500 1324 487.500Z" fill="#808080" stroke="#000" stroke-width="1.600"/><circle cx="1343" cy="491.500" r="2.300" fill="#fff" stroke="#000" stroke-width="0.800"/><circle cx="1325" cy="500" r="2.300" fill="#fff" stroke="#000" stroke-width="0.800"/><path d="M1320 495.5L1323 495.5" stroke="#0000ff" stroke-width="1.3" fill="none"/><path d="M1345 495.5L1350 495.5" stroke="#0000ff" stroke-width="1.3" fill="none"/><path d="M1348 493.7L1348 497.3" stroke="#0000ff" stroke-width="1.3"/><path d="M1322 493.7L1322 497.3" stroke="#0000ff" stroke-width="1.3"/><path d="M1357.500 495.500L1368.500 484.500L1379.500 495.500L1368.500 506.500Z" fill="#808080" stroke="#404040" stroke-width="0.800"/><path d="M1361.500 488.500L1371.500 488.500L1375.500 492L1375.500 502.500L1361.500 502.500Z" fill="#fff" stroke="#000" stroke-width="1"/><path d="M1363 498L1367.500 490.500" stroke="#e0e000" stroke-width="2"/><path d="M1363 498L1367.500 490.500" stroke="#000" stroke-width="0.500"/><path d="M1363.500 500.500L1373 500.500" stroke="#000" stroke-width="0.800" stroke-dasharray="1 1"/><path d="M1292.500 517.500L1310.500 535.500L1310.500 517.500L1292.500 535.500Z" fill="#808080" stroke="#000" stroke-width="1.200"/><path d="M1287 526.5L1292 526.5" stroke="#0000ff" stroke-width="1.3" fill="none"/><path d="M1290 524.7L1290 528.3" stroke="#0000ff" stroke-width="1.3"/><path d="M1311 526.5L1317 526.5" stroke="#0000ff" stroke-width="1.3" fill="none"/><path d="M1315 524.7L1315 528.3" stroke="#0000ff" stroke-width="1.3"/><path d="M1328.500 520.500L1340.500 532.500L1340.500 520.500L1328.500 532.500Z" fill="#808080" stroke="#000" stroke-width="1.200"/><path d="M1324 526.5L1328 526.5" stroke="#0000ff" stroke-width="1.3" fill="none"/><path d="M1326 524.7L1326 528.3" stroke="#0000ff" stroke-width="1.3"/><path d="M1341 526.5L1345 526.5" stroke="#0000ff" stroke-width="1.3" fill="none"/><path d="M1343.5 524.7L1343.5 528.3" stroke="#0000ff" stroke-width="1.3"/><text x="1331.500" y="522" font-family="Liberation Sans" font-size="8" fill="#000">R</text><text x="1332" y="538" font-family="Liberation Sans" font-size="8" fill="#000">V</text><path d="M1294.500 545.500L1299.500 545.500L1309.500 556.500L1299.500 567.500L1294.500 567.500Z" fill="#808080" stroke="#000" stroke-width="1.300"/><path d="M1287 548.5L1294 548.5" stroke="#0000ff" stroke-width="1.3" fill="none"/><path d="M1291 546.7L1291 550.3" stroke="#0000ff" stroke-width="1.3"/><path d="M1287 556.5L1294 556.5" stroke="#0000ff" stroke-width="1.3" fill="none"/><path d="M1291 554.7L1291 558.3" stroke="#0000ff" stroke-width="1.3"/><path d="M1287 564.5L1294 564.5" stroke="#0000ff" stroke-width="1.3" fill="none"/><path d="M1291 562.7L1291 566.3" stroke="#0000ff" stroke-width="1.3"/><path d="M1310 556.5L1317 556.5" stroke="#0000ff" stroke-width="1.3" fill="none"/><path d="M1315 554.7L1315 558.3" stroke="#0000ff" stroke-width="1.3"/><rect x="1328.500" y="545.500" width="6" height="22" fill="#808080" stroke="#000" stroke-width="1.300"/><path d="M1319 556.5L1328 556.5" stroke="#0000ff" stroke-width="1.3" fill="none"/><path d="M1325 554.7L1325 558.3" stroke="#0000ff" stroke-width="1.3"/><path d="M1335 548.5L1348 548.5" stroke="#0000ff" stroke-width="1.3" fill="none"/><path d="M1345.5 546.7L1345.5 550.3" stroke="#0000ff" stroke-width="1.3"/><path d="M1335 556.5L1348 556.5" stroke="#0000ff" stroke-width="1.3" fill="none"/><path d="M1345.5 554.7L1345.5 558.3" stroke="#0000ff" stroke-width="1.3"/><path d="M1335 564.5L1348 564.5" stroke="#0000ff" stroke-width="1.3" fill="none"/><path d="M1345.5 562.7L1345.5 566.3" stroke="#0000ff" stroke-width="1.3"/><path d="M1358.500 550L1364.500 550L1364.500 559L1361.500 562.5L1358.500 559Z" fill="#808080" stroke="#000" stroke-width="1.200"/><path d="M1361.500 549.5L1361.500 547L1367 547" stroke="#0000ff" stroke-width="1.3" fill="none"/><path d="M1365.5 545.2L1365.5 548.8" stroke="#0000ff" stroke-width="1.3"/><path d="M1361.500 563L1361.500 565.5L1367 565.5" stroke="#0000ff" stroke-width="1.3" fill="none"/><path d="M1365.5 563.7L1365.5 567.3" stroke="#0000ff" stroke-width="1.3"/><path d="M1354 556.5L1358.5 556.5" stroke="#0000ff" stroke-width="1.3" fill="none"/><path d="M1356.5 554.7L1356.5 558.3" stroke="#0000ff" stroke-width="1.3"/><path d="M1365 556.5L1368 556.5" stroke="#0000ff" stroke-width="1.3" fill="none"/><path d="M1369.500 550.5L1373.500 550.5L1373.500 548L1378 552.5L1373.500 557L1373.500 554.5L1369.500 554.5Z" fill="#000"/><rect x="1378.500" y="546.5" width="4.500" height="12" fill="#fff" stroke="#000" stroke-width="1.200"/><path d="M1378.500 550.5L1383 550.5M1378.500 554.5L1383 554.5" stroke="#000" stroke-width="1.200"/><path d="M1291.500 581L1291.500 596C1291.500 602 1311.500 602 1311.500 596L1311.500 581Z" fill="#808080" stroke="#000" stroke-width="1.300"/><ellipse cx="1301.500" cy="581" rx="10" ry="3" fill="#808080" stroke="#000" stroke-width="1.200"/><path d="M1292 575L1299 590" stroke="#000" stroke-width="1" fill="none"/><path d="M1297 596L1305 589" stroke="#000" stroke-width="3"/><path d="M1297.500 595.500L1304.500 589.500" stroke="#fff" stroke-width="1.600"/><path d="M1301.500 582L1301.500 576.500L1316 576.500" stroke="#0000ff" stroke-width="1.3" fill="none"/><path d="M1313.5 574.7L1313.5 578.3" stroke="#0000ff" stroke-width="1.3"/><path d="M1291 584.5L1287 584.5" stroke="#0000ff" stroke-width="1.3" fill="none"/><path d="M1289 582.7L1289 586.3" stroke="#0000ff" stroke-width="1.3"/><path d="M1312 596.5L1316 596.5" stroke="#0000ff" stroke-width="1.3" fill="none"/><path d="M1314 594.7L1314 598.3" stroke="#0000ff" stroke-width="1.3"/><path d="M1326 579.500L1344 579.500C1348.500 579.500 1348.500 585 1345 587L1347 592C1347 595.500 1345 595.500 1343 595.500L1326 595.500C1321.500 595.500 1321.500 591 1324 589L1322.500 584C1322.500 579.500 1324 579.500 1326 579.500Z" fill="#808080" stroke="#000" stroke-width="1.600"/><defs><pattern id="chk" width="2" height="2" patternUnits="userSpaceOnUse"><rect width="2" height="2" fill="#fff"/><rect width="1" height="1" fill="#000"/><rect x="1" y="1" width="1" height="1" fill="#000"/></pattern></defs><path d="M1328 581L1339 581L1343 594L1331 594Z" fill="url(#chk)"/><circle cx="1343.500" cy="583.500" r="2.300" fill="#fff"/><circle cx="1326" cy="591.500" r="2.300" fill="#fff"/><path d="M1319 587.5L1323 587.5" stroke="#0000ff" stroke-width="1.3" fill="none"/><path d="M1321 585.7L1321 589.3" stroke="#0000ff" stroke-width="1.3"/><path d="M1346 587.5L1350 587.5" stroke="#0000ff" stroke-width="1.3" fill="none"/><path d="M1348 585.7L1348 589.3" stroke="#0000ff" stroke-width="1.3"/><rect x="1359.500" y="579" width="5.500" height="15" rx="2.700" fill="#808080" stroke="#000" stroke-width="1.200"/><path d="M1360.500 584L1364 589L1364 584L1360.500 589Z" fill="#fff" stroke="#000" stroke-width="0.600"/><path d="M1361.500 579.5L1361.500 577L1367 577" stroke="#0000ff" stroke-width="1.3" fill="none"/><path d="M1365.5 575.2L1365.5 578.8" stroke="#0000ff" stroke-width="1.3"/><path d="M1361.500 593L1361.500 595.5L1367 595.5" stroke="#0000ff" stroke-width="1.3" fill="none"/><path d="M1365.5 593.7L1365.5 597.3" stroke="#0000ff" stroke-width="1.3"/><path d="M1354 586.5L1358.5 586.5" stroke="#0000ff" stroke-width="1.3" fill="none"/><path d="M1356.5 584.7L1356.5 588.3" stroke="#0000ff" stroke-width="1.3"/><path d="M1365 586.5L1368 586.5" stroke="#0000ff" stroke-width="1.3" fill="none"/><path d="M1369.500 580.5L1373.500 580.5L1373.500 578L1378 582.5L1373.500 587L1373.500 584.5L1369.500 584.5Z" fill="#000"/><rect x="1378.500" y="576.5" width="4.500" height="12" fill="#fff" stroke="#000" stroke-width="1.200"/><path d="M1378.500 580.5L1383 580.5M1378.500 584.5L1383 584.5" stroke="#000" stroke-width="1.200"/><rect x="1294.5" y="623.5" width="6.500" height="21" rx="3.200" fill="#fff" stroke="#000" stroke-width="1.200"/><path d="M1295.5 628.5L1299.5 628.5L1299.5 631.5L1296.5 631.5L1296.5 634.5L1299.5 634.5L1299.5 637.5L1296.5 637.5L1296.5 640.5L1300.0 640.5" stroke="#000" stroke-width="1.1" fill="none"/><path d="M1287.0 632.5L1294.5 632.5" stroke="#0000ff" stroke-width="1.3" fill="none"/><path d="M1291.5 630.7L1291.5 634.3" stroke="#0000ff" stroke-width="1.3"/><path d="M1297.5 623L1297.5 621.500L1316.5 621.500" stroke="#0000ff" stroke-width="1.3" fill="none"/><path d="M1314.5 619.7L1314.5 623.3" stroke="#0000ff" stroke-width="1.3"/><path d="M1301.0 629.500L1316.5 629.500M1308.5 621.500L1308.5 629.500" stroke="#0000ff" stroke-width="1.3" fill="none"/><path d="M1314.5 627.7L1314.5 631.3" stroke="#0000ff" stroke-width="1.3"/><circle cx="1308.5" cy="625.5" r="2.300" fill="#0000ff" stroke="#000" stroke-width="0.900"/><path d="M1297.5 645L1297.5 645.500L1316.5 645.500" stroke="#0000ff" stroke-width="1.3" fill="none"/><path d="M1314.5 643.7L1314.5 647.3" stroke="#0000ff" stroke-width="1.3"/><path d="M1301.0 637.500L1308.5 637.500L1308.5 645.500" stroke="#0000ff" stroke-width="1.3" fill="none"/><circle cx="1308.5" cy="641.5" r="2.300" fill="#ff0000" stroke="#000" stroke-width="0.900"/><rect x="1327.5" y="623.5" width="6.500" height="21" rx="3.200" fill="#fff" stroke="#000" stroke-width="1.200"/><path d="M1328.5 628.5L1332.5 628.5L1332.5 631.5L1329.5 631.5L1329.5 634.5L1332.5 634.5L1332.5 637.5L1329.5 637.5L1329.5 640.5L1333.0 640.5" stroke="#000" stroke-width="1.1" fill="none"/><path d="M1320.0 632.5L1327.5 632.5" stroke="#0000ff" stroke-width="1.3" fill="none"/><path d="M1324.5 630.7L1324.5 634.3" stroke="#0000ff" stroke-width="1.3"/><path d="M1330.5 623L1330.5 621.500L1349.5 621.500" stroke="#0000ff" stroke-width="1.3" fill="none"/><path d="M1347.5 619.7L1347.5 623.3" stroke="#0000ff" stroke-width="1.3"/><path d="M1334.0 629.500L1349.5 629.500M1341.5 621.500L1341.5 629.500" stroke="#0000ff" stroke-width="1.3" fill="none"/><path d="M1347.5 627.7L1347.5 631.3" stroke="#0000ff" stroke-width="1.3"/><circle cx="1341.5" cy="625.5" r="2.300" fill="#0000ff" stroke="#000" stroke-width="0.900"/><path d="M1330.5 645L1330.5 645.500L1349.5 645.500" stroke="#0000ff" stroke-width="1.3" fill="none"/><path d="M1347.5 643.7L1347.5 647.3" stroke="#0000ff" stroke-width="1.3"/><rect x="1363.500" y="623.500" width="10" height="20" fill="#808080" stroke="#000" stroke-width="1.300"/><path d="M1365.500 626L1371.500 641M1371.500 626L1365.500 641" stroke="#fff" stroke-width="1.600"/><path d="M1354 632.5L1363 632.5" stroke="#0000ff" stroke-width="1.3" fill="none"/><path d="M1360 630.7L1360 634.3" stroke="#0000ff" stroke-width="1.3"/><path d="M1368.500 623L1368.500 621.500L1384 621.500" stroke="#0000ff" stroke-width="1.3" fill="none"/><path d="M1382 619.7L1382 623.3" stroke="#0000ff" stroke-width="1.3"/><path d="M1368.500 644L1368.500 645.500L1384 645.500" stroke="#0000ff" stroke-width="1.3" fill="none"/><path d="M1382 643.7L1382 647.3" stroke="#0000ff" stroke-width="1.3"/><rect x="1294.5" y="659.5" width="6.500" height="21" rx="3.200" fill="#fff" stroke="#000" stroke-width="1.200"/><path d="M1295.5 664.5L1299.5 664.5L1299.5 667.5L1296.5 667.5L1296.5 670.5L1299.5 670.5L1299.5 673.5L1296.5 673.5L1296.5 676.5L1300.0 676.5" stroke="#000" stroke-width="1.1" fill="none"/><path d="M1287 663.5L1294.5 663.5" stroke="#0000ff" stroke-width="1.3" fill="none"/><path d="M1291.5 661.7L1291.5 665.3" stroke="#0000ff" stroke-width="1.3"/><path d="M1287 675.5L1294.5 675.5" stroke="#0000ff" stroke-width="1.3" fill="none"/><path d="M1291.5 673.7L1291.5 677.3" stroke="#0000ff" stroke-width="1.3"/><path d="M1297.500 659L1297.500 657.500L1316.500 657.500" stroke="#0000ff" stroke-width="1.3" fill="none"/><path d="M1314.5 655.7L1314.5 659.3" stroke="#0000ff" stroke-width="1.3"/><path d="M1297.500 681L1297.500 681.500L1316.500 681.500" stroke="#0000ff" stroke-width="1.3" fill="none"/><path d="M1314.5 679.7L1314.5 683.3" stroke="#0000ff" stroke-width="1.3"/><rect x="1327.5" y="659.5" width="6.500" height="21" rx="3.200" fill="#fff" stroke="#000" stroke-width="1.200"/><path d="M1328.5 664.5L1332.5 664.5L1332.5 667.5L1329.5 667.5L1329.5 670.5L1332.5 670.5L1332.5 673.5L1329.5 673.5L1329.5 676.5L1333.0 676.5" stroke="#000" stroke-width="1.1" fill="none"/><path d="M1320 668.5L1327.5 668.5" stroke="#0000ff" stroke-width="1.3" fill="none"/><path d="M1324.5 666.7L1324.5 670.3" stroke="#0000ff" stroke-width="1.3"/><path d="M1330.500 659L1330.500 657.500L1349.500 657.500" stroke="#0000ff" stroke-width="1.3" fill="none"/><path d="M1347.5 655.7L1347.5 659.3" stroke="#0000ff" stroke-width="1.3"/><path d="M1330.500 681L1330.500 681.500L1349.500 681.500" stroke="#0000ff" stroke-width="1.3" fill="none"/><path d="M1347.5 679.7L1347.5 683.3" stroke="#0000ff" stroke-width="1.3"/><path d="M1334 673.500L1341.500 673.500L1341.500 681.500" stroke="#0000ff" stroke-width="1.3" fill="none"/><circle cx="1341.5" cy="677.5" r="2.300" fill="#ff0000" stroke="#000" stroke-width="0.900"/><rect x="1360.500" y="659.500" width="10" height="20" fill="#808080" stroke="#000" stroke-width="1.300"/><path d="M1364 663L1370 663M1361 666L1367 666M1364 669L1370 669M1361 672L1367 672M1364 675L1370 675" stroke="#fff" stroke-width="1.100"/><path d="M1355 670.5L1360.5 670.5" stroke="#0000ff" stroke-width="1.3" fill="none"/><path d="M1358 668.7L1358 672.3" stroke="#0000ff" stroke-width="1.3"/><path d="M1365.500 659L1365.500 657.500L1382.500 657.500" stroke="#0000ff" stroke-width="1.3" fill="none"/><path d="M1381 655.7L1381 659.3" stroke="#0000ff" stroke-width="1.3"/><path d="M1371 661.500L1373 661.500L1373 665.500L1382.500 665.500" stroke="#0000ff" stroke-width="1.3" fill="none"/><path d="M1381 663.7L1381 667.3" stroke="#0000ff" stroke-width="1.3"/><circle cx="1376.5" cy="661.5" r="2.300" fill="#0000ff" stroke="#000" stroke-width="0.900"/><path d="M1365.500 680L1365.500 681.500L1382.500 681.500" stroke="#0000ff" stroke-width="1.3" fill="none"/><path d="M1381 679.7L1381 683.3" stroke="#0000ff" stroke-width="1.3"/><path d="M1371 676.500L1373 676.500L1373 673.500L1376.500 673.500L1376.500 681.500" stroke="#0000ff" stroke-width="1.3" fill="none"/><circle cx="1376.5" cy="677.5" r="2.300" fill="#ff0000" stroke="#000" stroke-width="0.900"/><rect x="1296.5" y="691.5" width="6.500" height="14" rx="3.200" fill="#808080" stroke="#000" stroke-width="1.200"/><path d="M1297 695.500L1303 695.500M1297 701.500L1303 701.500" stroke="#000" stroke-width="0.900"/><path d="M1292 698.5L1296.5 698.5" stroke="#0000ff" stroke-width="1.3" fill="none"/><path d="M1294 696.7L1294 700.3" stroke="#0000ff" stroke-width="1.3"/><path d="M1299.500 691L1299.500 689.500L1313 689.500M1303 695.500L1306.500 695.500L1306.500 693.500L1313 693.500" stroke="#0000ff" stroke-width="1.3" fill="none"/><path d="M1311.5 687.7L1311.5 691.3" stroke="#0000ff" stroke-width="1.3"/><path d="M1311.5 691.7L1311.5 695.3" stroke="#0000ff" stroke-width="1.3"/><circle cx="1306" cy="689.5" r="2.300" fill="#808080" stroke="#000" stroke-width="0.900"/><path d="M1299.500 706L1299.500 707.500L1313 707.500M1303 701.500L1306.500 701.500L1306.500 707.500" stroke="#0000ff" stroke-width="1.3" fill="none"/><path d="M1311.5 705.7L1311.5 709.3" stroke="#0000ff" stroke-width="1.3"/><circle cx="1306" cy="707.5" r="2.300" fill="#808080" stroke="#000" stroke-width="0.900"/><rect x="1327.5" y="688.5" width="6.500" height="20" rx="3.200" fill="#ffffff00" stroke="#000" stroke-width="1.200"/><rect x="1327.500" y="688.500" width="6.500" height="20" rx="3.200" fill="#fff" stroke="#000" stroke-width="1.200"/><path d="M1329.500 694.500L1329.500 700.500L1333 700.500" stroke="#000" stroke-width="1.100" fill="none"/><path d="M1320 692.5L1327.5 692.5" stroke="#0000ff" stroke-width="1.3" fill="none"/><path d="M1324.5 690.7L1324.5 694.3" stroke="#0000ff" stroke-width="1.3"/><path d="M1320 704.5L1327.5 704.5" stroke="#0000ff" stroke-width="1.3" fill="none"/><path d="M1324.5 702.7L1324.5 706.3" stroke="#0000ff" stroke-width="1.3"/><path d="M1330.500 688L1330.500 686.500L1349.500 686.500" stroke="#0000ff" stroke-width="1.3" fill="none"/><path d="M1347.5 684.7L1347.5 688.3" stroke="#0000ff" stroke-width="1.3"/><path d="M1330.500 709L1330.500 710.500L1349.500 710.500" stroke="#0000ff" stroke-width="1.3" fill="none"/><path d="M1347.5 708.7L1347.5 712.3" stroke="#0000ff" stroke-width="1.3"/><rect x="1296.500" y="719.500" width="28" height="14" fill="#fff" stroke="#000" stroke-width="1.200"/><rect x="1344.500" y="719.500" width="30" height="14" fill="#fff" stroke="#000" stroke-width="1.200"/><g font-family="Liberation Mono" font-weight="bold" font-size="6.500" fill="#000"><text x="1301.500" y="726" textLength="18" lengthAdjust="spacingAndGlyphs">FLOW</text><text x="1300.500" y="732" textLength="20" lengthAdjust="spacingAndGlyphs">SHEET</text><text x="1346.500" y="726" textLength="26" lengthAdjust="spacingAndGlyphs">CUSTOM</text><text x="1346.500" y="732" textLength="26" lengthAdjust="spacingAndGlyphs">COLUMN</text></g><path d="M1290.5 756.500L1301.5 745.500L1312.5 756.500L1301.5 767.500Z" fill="#808080" stroke="#202020" stroke-width="1.300"/><text x="1301.5" y="761.500" text-anchor="middle" font-family="Liberation Sans" font-weight="bold" font-size="13" fill="#00ff00">A</text><path d="M1323.5 756.500L1334.5 745.500L1345.5 756.500L1334.5 767.500Z" fill="#808080" stroke="#202020" stroke-width="1.300"/><text x="1334.5" y="761.500" text-anchor="middle" font-family="Liberation Sans" font-weight="bold" font-size="13" fill="#00ff00">S</text><path d="M1358.5 756.500L1369.5 745.500L1380.5 756.500L1369.5 767.500Z" fill="#808080" stroke="#202020" stroke-width="1.300"/><text x="1369.5" y="761.500" text-anchor="middle" font-family="Liberation Sans" font-weight="bold" font-size="13" fill="#00ff00">R</text><rect x="1291.500" y="774.500" width="24" height="24" fill="#303030" stroke="#000" stroke-width="1"/><g fill="#fff"><rect x="1292.5" y="775.5" width="3" height="2.500" fill="#909090"/><rect x="1292.5" y="779.5" width="3" height="2.500" fill="#909090"/><rect x="1292.5" y="783.5" width="3" height="2.500" fill="#909090"/><rect x="1292.5" y="787.5" width="3" height="2.500" fill="#909090"/><rect x="1292.5" y="791.5" width="3" height="2.500" fill="#909090"/><rect x="1292.5" y="795.5" width="3" height="2.500" fill="#909090"/><rect x="1296.5" y="775.5" width="3" height="2.500" fill="#909090"/><rect x="1296.5" y="779.5" width="3" height="2.500" fill="#fff"/><rect x="1296.5" y="783.5" width="3" height="2.500" fill="#fff"/><rect x="1296.5" y="787.5" width="3" height="2.500" fill="#fff"/><rect x="1296.5" y="791.5" width="3" height="2.500" fill="#fff"/><rect x="1296.5" y="795.5" width="3" height="2.500" fill="#fff"/><rect x="1300.5" y="775.5" width="3" height="2.500" fill="#909090"/><rect x="1300.5" y="779.5" width="3" height="2.500" fill="#fff"/><rect x="1300.5" y="783.5" width="3" height="2.500" fill="#fff"/><rect x="1300.5" y="787.5" width="3" height="2.500" fill="#fff"/><rect x="1300.5" y="791.5" width="3" height="2.500" fill="#fff"/><rect x="1300.5" y="795.5" width="3" height="2.500" fill="#fff"/><rect x="1304.5" y="775.5" width="3" height="2.500" fill="#909090"/><rect x="1304.5" y="779.5" width="3" height="2.500" fill="#fff"/><rect x="1304.5" y="783.5" width="3" height="2.500" fill="#fff"/><rect x="1304.5" y="787.5" width="3" height="2.500" fill="#fff"/><rect x="1304.5" y="791.5" width="3" height="2.500" fill="#fff"/><rect x="1304.5" y="795.5" width="3" height="2.500" fill="#fff"/><rect x="1308.5" y="775.5" width="3" height="2.500" fill="#909090"/><rect x="1308.5" y="779.5" width="3" height="2.500" fill="#fff"/><rect x="1308.5" y="783.5" width="3" height="2.500" fill="#fff"/><rect x="1308.5" y="787.5" width="3" height="2.500" fill="#fff"/><rect x="1308.5" y="791.5" width="3" height="2.500" fill="#fff"/><rect x="1308.5" y="795.5" width="3" height="2.500" fill="#fff"/><rect x="1312.5" y="775.5" width="3" height="2.500" fill="#909090"/><rect x="1312.5" y="779.5" width="3" height="2.500" fill="#fff"/><rect x="1312.5" y="783.5" width="3" height="2.500" fill="#fff"/><rect x="1312.5" y="787.5" width="3" height="2.500" fill="#fff"/><rect x="1312.5" y="791.5" width="3" height="2.500" fill="#fff"/><rect x="1312.5" y="795.5" width="3" height="2.500" fill="#fff"/></g><path d="M1287 782.500L1302 782.500M1287 791.500L1306 791.500" stroke="#00c000" stroke-width="1.3" fill="none"/><path d="M1300 780.7L1300 784.3" stroke="#00c000" stroke-width="1.3"/><path d="M1304 789.7L1304 793.3" stroke="#00c000" stroke-width="1.3"/><circle cx="1334.500" cy="786.500" r="10.200" fill="#808080" stroke="#202020" stroke-width="1.200"/><path d="M1324.500 784.500L1344.500 784.500" stroke="#00e000" stroke-width="1.4" fill="none"/><path d="M1320 786.5L1324 786.5" stroke="#008000" stroke-width="1.3" fill="none"/><path d="M1322 784.7L1322 788.3" stroke="#008000" stroke-width="1.3"/><path d="M1345 786.5L1349 786.5" stroke="#008000" stroke-width="1.3" fill="none"/><path d="M1347.5 784.7L1347.5 788.3" stroke="#008000" stroke-width="1.3"/><rect x="1362.500" y="774.500" width="12" height="24" fill="#808080" stroke="#000" stroke-width="1.300"/><path d="M1363 778.500L1371 786.500L1374 786.500" stroke="#00e000" stroke-width="1.5" fill="none"/><path d="M1363 786.500L1371 786.500M1363 794.500L1371 786.500" stroke="#c0ffc0" stroke-width="0.8" fill="none"/><path d="M1354 778.5L1362 778.5" stroke="#008000" stroke-width="1.3" fill="none"/><path d="M1359.5 776.7L1359.5 780.3" stroke="#008000" stroke-width="1.3"/><path d="M1354 786.5L1362 786.5" stroke="#008000" stroke-width="1.3" fill="none"/><path d="M1359.5 784.7L1359.5 788.3" stroke="#008000" stroke-width="1.3"/><path d="M1354 794.5L1362 794.5" stroke="#008000" stroke-width="1.3" fill="none"/><path d="M1359.5 792.7L1359.5 796.3" stroke="#008000" stroke-width="1.3"/><path d="M1375 786.5L1384 786.5" stroke="#008000" stroke-width="1.3" fill="none"/><path d="M1381.5 784.7L1381.5 788.3" stroke="#008000" stroke-width="1.3"/><rect x="1295.500" y="804.500" width="9" height="22" fill="#808080" stroke="#000" stroke-width="1.300"/><path d="M1297 812.500L1303 812.500M1297 814.500L1303 814.500" stroke="#00e000" stroke-width="1" fill="none"/><path d="M1287 807.5L1295 807.5" stroke="#008000" stroke-width="1.3" fill="none"/><path d="M1292.5 805.7L1292.5 809.3" stroke="#008000" stroke-width="1.3"/><path d="M1287 815.5L1295 815.5" stroke="#008000" stroke-width="1.3" fill="none"/><path d="M1292.5 813.7L1292.5 817.3" stroke="#008000" stroke-width="1.3"/><path d="M1287 823.5L1295 823.5" stroke="#008000" stroke-width="1.3" fill="none"/><path d="M1292.5 821.7L1292.5 825.3" stroke="#008000" stroke-width="1.3"/><path d="M1305 811.5L1316 811.5" stroke="#008000" stroke-width="1.3" fill="none"/><path d="M1314 809.7L1314 813.3" stroke="#008000" stroke-width="1.3"/><path d="M1305 818.5L1316 818.5" stroke="#008000" stroke-width="1.3" fill="none"/><path d="M1314 816.7L1314 820.3" stroke="#008000" stroke-width="1.3"/><rect x="1330.500" y="806.500" width="9" height="18" fill="#808080" stroke="#000" stroke-width="1.300"/><circle cx="1335" cy="811.500" r="2.200" fill="#00e000"/><circle cx="1335" cy="819.500" r="2.200" fill="#ff0000"/><rect x="1358.500" y="804.500" width="20" height="22" fill="#808080" stroke="#000" stroke-width="1.300"/><path d="M1359.500 819.500C1362 819.500 1362 808.500 1365 808.500C1367 808.500 1367 813.500 1370 813.500C1373 813.500 1374 811.500 1378 811.500" stroke="#00e000" stroke-width="1.2" fill="none"/><path d="M1354 815.5L1358 815.5" stroke="#008000" stroke-width="1.3" fill="none"/><path d="M1356 813.7L1356 817.3" stroke="#008000" stroke-width="1.3"/><path d="M1379 815.5L1384 815.5" stroke="#008000" stroke-width="1.3" fill="none"/><path d="M1381.5 813.7L1381.5 817.3" stroke="#008000" stroke-width="1.3"/><circle cx="1334.500" cy="847.500" r="10.200" fill="#808080" stroke="#303030" stroke-width="1.200"/><rect x="1331.500" y="843.500" width="6.500" height="8" fill="#808080" stroke="#000" stroke-width="1.200"/><rect x="1333" y="846" width="3.500" height="3" fill="#0000ff"/><path d="M1325 845.500L1331 845.500M1325 849.500L1331 849.500M1338 845.500L1344 845.500M1338 849.500L1344 849.500" stroke="#00e000" stroke-width="1.3" fill="none"/><path d="M1320 847.5L1324 847.5" stroke="#008000" stroke-width="1.3" fill="none"/><path d="M1322 845.7L1322 849.3" stroke="#008000" stroke-width="1.3"/><path d="M1345 847.5L1349 847.5" stroke="#008000" stroke-width="1.3" fill="none"/><path d="M1347.5 845.7L1347.5 849.3" stroke="#008000" stroke-width="1.3"/></svg>
<div class="a " style="left:0px;top:963px;width:1400px;height:1px;background:#000;"></div>
<div class="a " style="left:0px;top:964px;width:1400px;height:59px;background:#d4d0c8;"></div>
<div class="a " style="left:0px;top:964px;width:1400px;height:1px;background:#fff;"></div>
<div class="a sunk" style="left:0px;top:966px;width:700px;height:31px;background:#fff;"></div>
<div class="a sunk" style="left:703px;top:966px;width:695px;height:31px;background:#fff;"></div>
<div class="a btn2" style="left:1383px;top:968px;width:14px;height:13px;"></div>
<svg style="left:1387px;top:973px" width="6" height="3"><path d="M0 3L3 0L6 3Z" fill="#000"/></svg>
<div class="a btn2" style="left:1383px;top:982px;width:14px;height:13px;"></div>
<svg style="left:1387px;top:987px" width="6" height="3"><path d="M0 0L6 0L3 3Z" fill="#000"/></svg>
<span class="t" style="left:708px;top:971px;font-family:'Liberation Mono',monospace;font-size:11px;line-height:13px;color:#ff0000;transform:scaleX(1.06)">Total NL-Solver Iterations: 9</span>
<div class="a " style="left:0px;top:998px;width:1400px;height:1px;background:#fff;"></div>
<div class="a sunk1" style="left:1px;top:1000px;width:118px;height:21px;"></div>
<div class="a sunk1" style="left:121px;top:1000px;width:1164px;height:21px;"></div>
<div class="a sunk1" style="left:1288px;top:1000px;width:112px;height:21px;"></div>
<span class="t" style="left:130.0px;top:1004px;font-size:11px;line-height:13px;color:#000080;transform:scaleX(0.978);">Electricity2</span>
<svg style="left:1295px;top:1005px" width="34" height="10"><path d="M1 8.5L7.5 2L14 8.5Z" fill="#008080" stroke="#000" stroke-width="1"/><rect x="15.5" y="0" width="3" height="10" fill="#0000c0"/><rect x="15.5" y="8" width="3" height="2" fill="#e0e000"/><path d="M20 2L33 2L26.5 8.5Z" fill="#008080" stroke="#000" stroke-width="1"/></svg>
<div class="a tg" style="left:0px;top:0px;width:1400px;height:18px;"></div>
<svg style="left:1px;top:1px" width="17" height="16"><rect x="7" y="1" width="9" height="13" rx="1" fill="#c0c0c0" stroke="#c8b400" stroke-width="1.2"/><path d="M1 4L1 15L13 9Z" fill="#00a0a0"/><path d="M1 4L13 9L1 9Z" fill="#006060"/><path d="M2 1L12 8" stroke="#fff" stroke-width="1.4"/><path d="M5 1L13 7" stroke="#e8e000" stroke-width="1.2"/><path d="M3 2L11 9" stroke="#000" stroke-width="0.8"/></svg>
<span class="t" style="left:19.0px;top:2px;font-size:12px;line-height:14px;color:#fff;font-weight:bold;transform:scaleX(0.950);">refrig2.hsc - HYSYS</span>
<div class="a btn" style="left:1349px;top:2px;width:16px;height:14px;"></div>
<div class="a " style="left:1353px;top:11px;width:6px;height:2px;background:#000;"></div>
<div class="a btn" style="left:1365px;top:2px;width:16px;height:14px;"></div>
<div class="a " style="left:1370px;top:4px;width:6px;height:6px;border:1px solid #000;border-top:2px solid #000;"></div>
<div class="a " style="left:1368px;top:7px;width:6px;height:6px;border:1px solid #000;border-top:2px solid #000;background:#d4d0c8;"></div>
<div class="a btn" style="left:1383px;top:2px;width:16px;height:14px;"></div>
<svg style="left:1387px;top:5px" width="8" height="7"><path d="M0.5 0L7.5 7M7.5 0L0.5 7" stroke="#000" stroke-width="1.6" fill="none"/></svg>
<div class="a " style="left:0px;top:18px;width:1400px;height:20px;background:#d4d0c8;"></div>
<span class="t" style="left:6.0px;top:22px;font-size:11px;line-height:13px;color:#000;transform:scaleX(0.903);">File</span>
<span class="t" style="left:33.0px;top:22px;font-size:11px;line-height:13px;color:#000;transform:scaleX(0.949);">Edit</span>
<span class="t" style="left:63.0px;top:22px;font-size:11px;line-height:13px;color:#000;transform:scaleX(0.934);">Simulation</span>
<span class="t" style="left:123.0px;top:22px;font-size:11px;line-height:13px;color:#000;transform:scaleX(0.977);">Flowsheet</span>
<span class="t" style="left:184.0px;top:22px;font-size:11px;line-height:13px;color:#000;transform:scaleX(0.864);">PFD</span>
<span class="t" style="left:216.0px;top:22px;font-size:11px;line-height:13px;color:#000;transform:scaleX(0.973);">Tools</span>
<span class="t" style="left:252.0px;top:22px;font-size:11px;line-height:13px;color:#000;transform:scaleX(0.971);">Window</span>
<span class="t" style="left:302.0px;top:22px;font-size:11px;line-height:13px;color:#000;transform:scaleX(0.928);">Help</span>
<div class="a " style="left:0px;top:38px;width:1400px;height:1px;background:#000;"></div>
<div class="a " style="left:0px;top:39px;width:1400px;height:26px;background:#d4d0c8;"></div>
<div class="a " style="left:0px;top:65px;width:1400px;height:1px;background:#000;"></div>
<div class="a " style="left:85px;top:41px;width:1px;height:22px;background:#808080;"></div>
<div class="a " style="left:86px;top:41px;width:1px;height:22px;background:#fff;"></div>
<div class="a " style="left:200px;top:41px;width:1px;height:22px;background:#808080;"></div>
<div class="a " style="left:201px;top:41px;width:1px;height:22px;background:#fff;"></div>
<div class="a " style="left:263px;top:41px;width:1px;height:22px;background:#808080;"></div>
<div class="a " style="left:264px;top:41px;width:1px;height:22px;background:#fff;"></div>
<div class="a " style="left:300px;top:41px;width:1px;height:22px;background:#808080;"></div>
<div class="a " style="left:301px;top:41px;width:1px;height:22px;background:#fff;"></div>
<div class="a " style="left:363px;top:41px;width:1px;height:22px;background:#808080;"></div>
<div class="a " style="left:364px;top:41px;width:1px;height:22px;background:#fff;"></div>
<div class="a " style="left:206px;top:40px;width:25px;height:24px;background:#e8e6e2;border:1px solid;border-color:#808080 #fff #fff #808080;"></div>
<div class="a " style="left:306px;top:40px;width:25px;height:24px;background:#e8e6e2;border:1px solid;border-color:#808080 #fff #fff #808080;"></div>
<svg style="left:8px;top:45px" width="12" height="14"><path d="M0.5 0.5L7.5 0.5L10.5 3.5L10.5 12.5L0.5 12.5Z" fill="#fff" stroke="#000"/><path d="M7.5 0.5L7.5 3.5L10.5 3.5" fill="none" stroke="#000"/></svg>
<svg style="left:32px;top:45px" width="17" height="14"><path d="M0.5 12.5L0.5 4.5L2 3L5 3L6.5 4.5L11.5 4.5L11.5 12.5Z" fill="#ffff80" stroke="#000"/><path d="M0.5 12.5L3.5 7.5L15.5 7.5L11.5 12.5Z" fill="#808000" stroke="#000"/><path d="M9 2.5C11 0.5 13.5 1 14.5 3.5M14.5 3.5L14.8 1M14.5 3.5L12 3.2" fill="none" stroke="#000"/></svg>
<svg style="left:59px;top:45px" width="15" height="14"><path d="M0.5 0.5L13.5 0.5L13.5 13.5L1.5 13.5L0.5 12.5Z" fill="#808000" stroke="#000"/><rect x="3" y="1" width="8" height="5" fill="#fff"/><rect x="3" y="1" width="8" height="1.5" fill="#c0c0c0"/><rect x="3.5" y="8.5" width="7" height="5" fill="#000"/><rect x="5" y="9.5" width="2" height="3" fill="#c0c0c0"/></svg>
<svg style="left:94px;top:42px" width="19" height="20"><rect x="5" y="4" width="6" height="11" rx="3" fill="#00e000" stroke="#000"/><rect x="6.5" y="5.5" width="2" height="8" fill="#a0ffa0"/><path d="M0 9.5L5 9.5M8 4L8 1.5L16 1.5M12 0L10 1.5L12 3M15 2L17 5L15 7L17 9M8 15L8 17.5L16 17.5M13 16L15 17.5L13 19M16 16L16 19" fill="none" stroke="#000"/></svg>
<svg style="left:121px;top:46px" width="17" height="13"><rect x="5" y="3" width="11.5" height="9.5" fill="#c0c0c0" stroke="#000080"/><rect x="0.5" y="0.5" width="12" height="9.5" fill="#fff" stroke="#000080"/><rect x="0.5" y="0.5" width="12" height="2.5" fill="#000080"/><path d="M2 5.5L11 5.5M2 7.5L11 7.5M4.5 4L4.5 9M7.5 4L7.5 9" stroke="#000080" fill="none"/></svg>
<svg style="left:149px;top:47px" width="13" height="11"><path d="M2 0L5 0L5 3L8 3L8 0L11 0L11 3L13 10L8 10L8 6L5 6L5 10L0 10L2 3Z" fill="#000"/><rect x="1.5" y="7" width="2" height="2" fill="#fff"/><rect x="9.5" y="7" width="2" height="2" fill="#fff"/></svg>
<svg style="left:172px;top:42px" width="18" height="21"><path d="M1.5 0L1.5 19" stroke="#008080" stroke-width="1.6" fill="none"/><path d="M3 0L3 19M3 5.5L10 5.5M3 10.5L10 10.5M3 15.5L10 15.5M3 19L8 19M7 3L7 18" stroke="#000" fill="none"/><rect x="10" y="3.5" width="6" height="3" rx="1.5" fill="#fff" stroke="#000"/><rect x="10" y="8.5" width="6" height="3" rx="1.5" fill="#fff" stroke="#000"/><rect x="10" y="13.5" width="6" height="3" rx="1.5" fill="#fff" stroke="#000"/><rect x="5" y="18" width="6" height="2.5" rx="1.2" fill="#fff" stroke="#000"/></svg>
<div class="a " style="left:210px;top:48px;width:18px;height:2px;background:#ff0000;"></div>
<div class="a " style="left:210px;top:56px;width:18px;height:2px;background:#0000c0;"></div>
<svg style="left:234px;top:46px" width="20" height="13"><path d="M0 1L4 1L10 10L14 10L16 7L19 7" stroke="#ff0000" stroke-width="1.6" fill="none"/><path d="M0 11L4 11L10 1L14 1L16 4L19 4" stroke="#0000c0" stroke-width="1.6" fill="none"/></svg>
<svg style="left:271px;top:42px" width="21" height="20"><path d="M3.5 3L13 12.5L16.5 12.5L19 9.4" stroke="#ff0000" stroke-width="1.500" fill="none"/><path d="M6 10L13 2.600L17 2.600L19 5.700" stroke="#0000c0" stroke-width="1.500" fill="none"/><circle cx="3.800" cy="10.800" r="3.200" fill="#ffff60" stroke="#808000"/><circle cx="3" cy="10" r="1.200" fill="#fff"/><rect x="2.500" y="14.500" width="3" height="3" fill="#4040ff" stroke="#000" stroke-width="0.600"/></svg>
<svg style="left:310px;top:47px" width="19" height="12"><path d="M0.300 2.800L5 3.800L5 8L2.500 6Z" fill="#c0c0c0" stroke="#000" stroke-width="0.900"/><path d="M17.700 2.800L13 3.800L13 8L15.500 6Z" fill="#c0c0c0" stroke="#000" stroke-width="0.900"/><path d="M4.500 2L6 0.500L12 0.500L13.500 2L13.500 8.500L12 10.500L6 10.500L4.500 8.500Z" fill="#b0b0b0" stroke="#303030" stroke-width="0.900"/><circle cx="9" cy="5.500" r="3.300" fill="#00e000"/><circle cx="8" cy="4.500" r="1.200" fill="#a0ffa0"/></svg>
<svg style="left:335px;top:47px" width="19" height="12"><path d="M0.300 2.800L5 3.800L5 8L2.500 6Z" fill="#c0c0c0" stroke="#000" stroke-width="0.900"/><path d="M17.700 2.800L13 3.800L13 8L15.500 6Z" fill="#c0c0c0" stroke="#000" stroke-width="0.900"/><path d="M4.500 2L6 0.500L12 0.500L13.500 2L13.500 8.500L12 10.500L6 10.500L4.500 8.500Z" fill="#b0b0b0" stroke="#303030" stroke-width="0.900"/><circle cx="9" cy="5.500" r="3.300" fill="#ff0000"/><circle cx="8" cy="4.500" r="1.200" fill="#ffa0a0"/></svg>
<svg style="left:375px;top:44px" width="13" height="16"><path d="M4.500 0.500L7.500 0.500L7.500 6L11.500 13L10.500 14.500L1.500 14.500L0.500 13L4.500 6Z" fill="#fff" stroke="#000"/><path d="M3 9L9 9L11 13L10.300 14L1.700 14L1 13Z" fill="#0000c0"/><rect x="3.500" y="10" width="4" height="2" fill="#c0b020"/><rect x="4.500" y="0" width="3" height="1.500" fill="#4060ff"/><rect x="5" y="2" width="1.200" height="6" fill="#c0c0c0"/></svg>
<svg style="left:395px;top:41px" width="24" height="22"><path d="M5 3L11 3L10.500 4.500C13.500 6 14 11.500 8 11.500C2 11.500 2.500 6 5.500 4.500Z" fill="#f0f000" stroke="#000" stroke-width="0.900"/><rect x="5" y="0.800" width="6" height="1.800" fill="#d8d800" stroke="#000" stroke-width="0.800"/><text x="5.500" y="10.500" font-family="Liberation Sans" font-weight="bold" font-size="8" fill="#008000">$</text><path d="M13 12.500L23 1.500L23 12.500Z" fill="#c0c0c0" stroke="#000" stroke-width="1"/><path d="M17.500 10.500L21 6.500L21 10.500Z" fill="#d4d0c8" stroke="#000" stroke-width="0.700"/><path d="M1 10.500L23 16.500M3 13L20 14.500M2 15L12 12M4 12L10 20M3 17L9 13M8 14L13 19" stroke="#000" fill="none" stroke-width="1"/><path d="M4 11L22 15" stroke="#fff" stroke-width="0.800"/></svg>
<span class="t" style="left:1201.0px;top:41px;font-size:11px;line-height:13px;color:#000;transform:scaleX(0.955);">Environment: Case (Main)</span>
<span class="t" style="left:1233.0px;top:53px;font-size:11px;line-height:13px;color:#000;transform:scaleX(0.972);">Mode: Steady State</span>
<div class="a " style="left:1332px;top:45px;width:38px;height:34px;background:rgba(0,0,0,.48);border:1px solid rgba(180,180,180,.9);box-shadow:inset 1px 1px rgba(255,255,255,.25),inset -1px -1px rgba(255,255,255,.25);"></div>
<svg style="left:1343px;top:47px" width="18" height="30"><path d="M0.500 1.500L8.500 4.500L16.500 1.500L16.500 4L8.500 11.500L0.500 4Z" fill="#f0f0f0" stroke="#ff5050" stroke-width="1"/><path d="M0.500 9L8.500 12L16.500 9L16.500 11.500L8.500 19L0.500 11.500Z" fill="#f0f0f0" stroke="#ff5050" stroke-width="1"/><path d="M0.500 16.500L8.500 19.500L16.500 16.500L16.500 19.500L8.500 28L0.500 19.500Z" fill="#b8b830" stroke="#ff4040" stroke-width="1"/></svg>
</body></html>
